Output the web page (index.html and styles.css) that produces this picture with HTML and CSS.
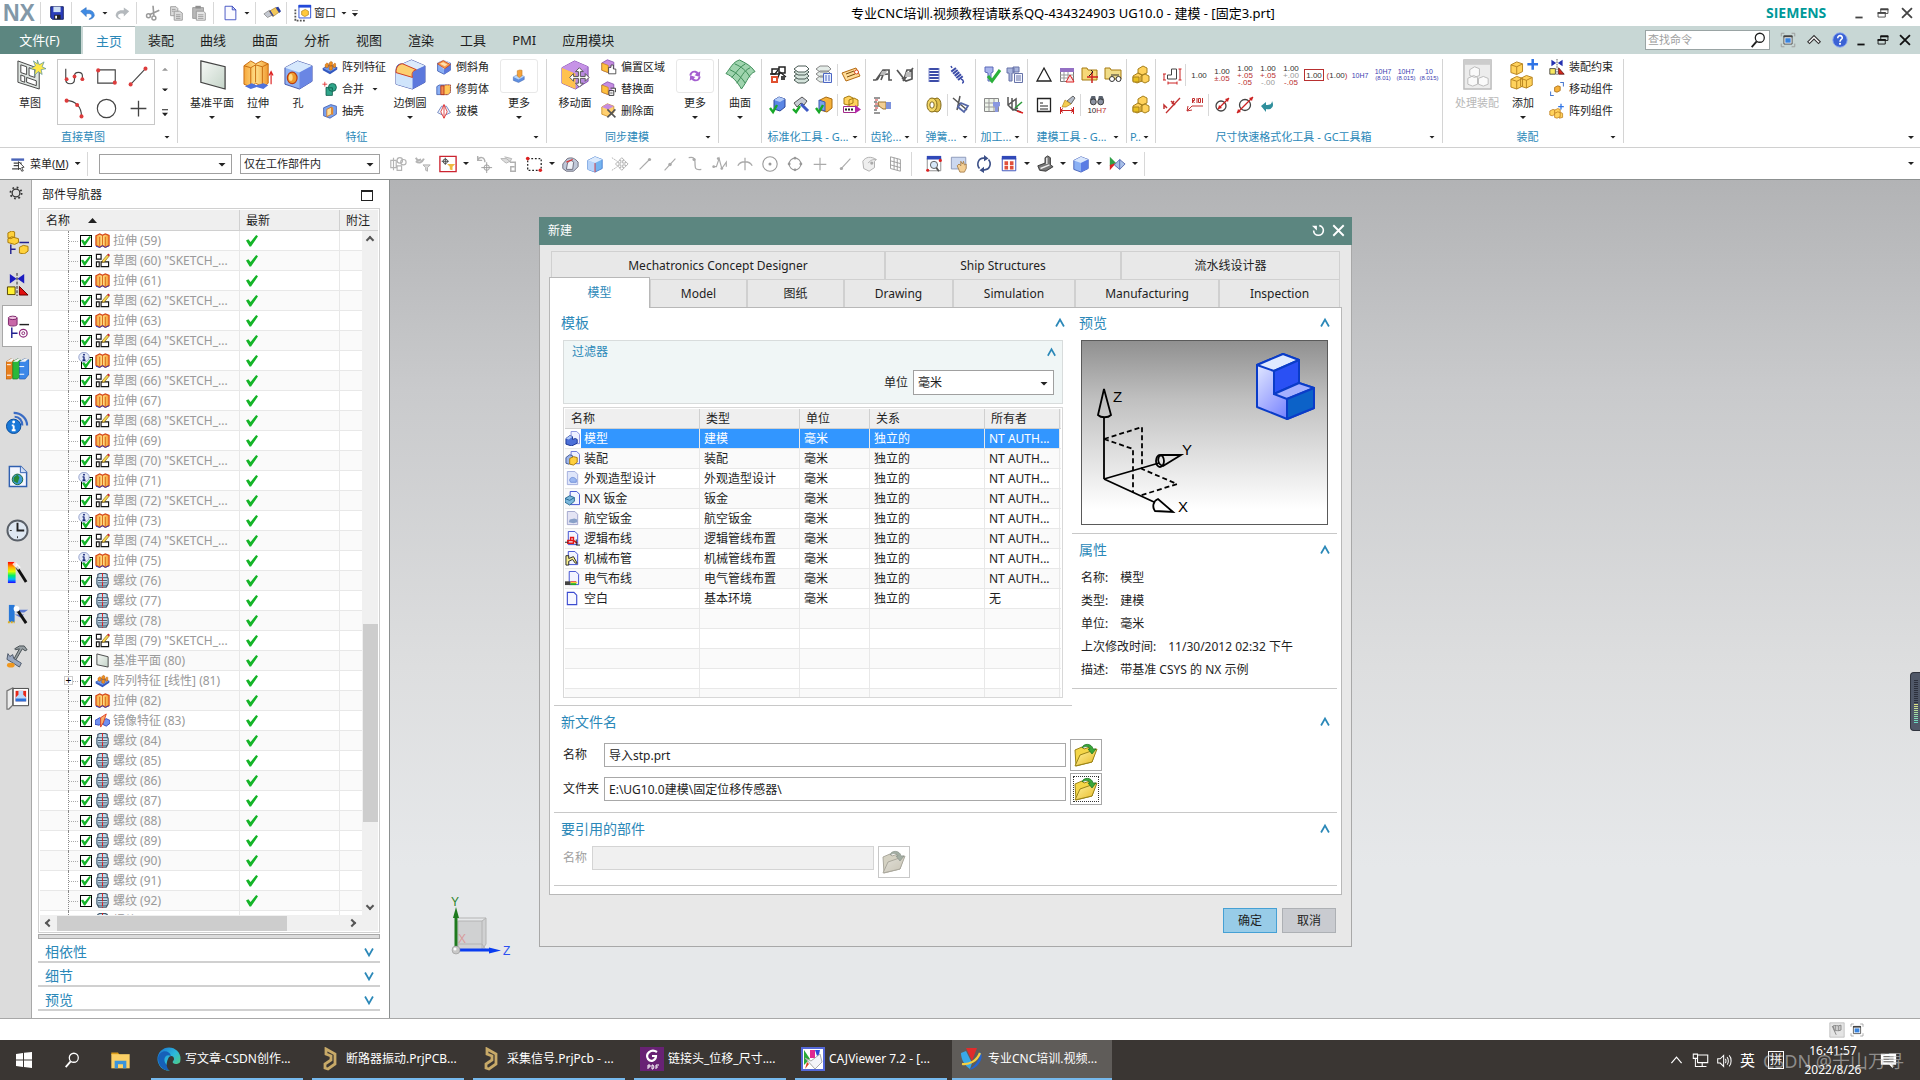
FILE: index.html
```html
<!DOCTYPE html>
<html lang="zh-CN">
<head>
<meta charset="UTF-8">
<meta name="viewport" content="width=device-width, initial-scale=1.0">
<title>NX 10 - 建模</title>
<link rel="stylesheet" href="styles.css">
</head>
<body>

<!-- Icon sprite -->
<svg class="sprite" aria-hidden="true">
<defs>
    <linearGradient id="gSilver" x1="0" y1="0" x2="1" y2="1"><stop offset="0" stop-color="#f6f8f6"/><stop offset="1" stop-color="#c4d4c8"/></linearGradient>
    <linearGradient id="gOrange" x1="0" y1="0" x2="1" y2="0"><stop offset="0" stop-color="#f6a83c"/><stop offset=".5" stop-color="#ffe08a"/><stop offset="1" stop-color="#f09a30"/></linearGradient>
    <linearGradient id="gYellow" x1="0" y1="0" x2="1" y2="1"><stop offset="0" stop-color="#fff6a8"/><stop offset="1" stop-color="#e8b820"/></linearGradient>
    <linearGradient id="gRainbow" x1="0" y1="0" x2="0" y2="1"><stop offset="0" stop-color="#f00"/><stop offset=".25" stop-color="#fa0"/><stop offset=".45" stop-color="#df0"/><stop offset=".65" stop-color="#0e6"/><stop offset=".82" stop-color="#0bf"/><stop offset="1" stop-color="#20f"/></linearGradient>
    <linearGradient id="gEdge" x1="0" y1="0" x2="1" y2="1"><stop offset="0" stop-color="#1a6fd0"/><stop offset=".5" stop-color="#2bb8dc"/><stop offset="1" stop-color="#62d65a"/></linearGradient>
    <linearGradient id="gFace" x1="0" y1="0" x2="1" y2="1"><stop offset="0" stop-color="#eef4ff"/><stop offset=".5" stop-color="#a0a8ff"/><stop offset="1" stop-color="#4a60ff"/></linearGradient>
</defs>

<symbol id="save" viewBox="0 0 20 20"><path d="M3 3h14v14H5l-2-2z" fill="#2a3dbb" stroke="#111c60"/><path d="M6 3h8v6H6z" fill="#cfe0f4"/><path d="M7 12h7v5H7z" fill="#222"/><path d="M8 13h2v3H8z" fill="#fff"/></symbol>
<symbol id="undo" viewBox="0 0 20 20"><path d="M2 8l6-4v3c6-1 9 2 9 6-1 3-4 4-6 4 3-2 4-3 3-5-1-1-3-2-6-1v3z" fill="#3f8be4" stroke="#2566bb" stroke-width=".6"/></symbol>
<symbol id="redo" viewBox="0 0 20 20"><path d="M18 8l-6-4v3c-6-1-9 2-9 6 1 3 4 4 6 4-3-2-4-3-3-5 1-1 3-2 6-1v3z" fill="#b4b9bd"/></symbol>
<symbol id="cut" viewBox="0 0 20 20"><path d="M10 2l1 11M17 7L6 12" stroke="#9a9a9a" stroke-width="1.8"/><circle cx="5" cy="13" r="2.2" fill="none" stroke="#9a9a9a" stroke-width="1.6"/><circle cx="11" cy="15.500" r="2.200" fill="none" stroke="#9a9a9a" stroke-width="1.600"/></symbol>
<symbol id="copy" viewBox="0 0 20 20"><g fill="#dcdcdc" stroke="#999"><path d="M4 3h6l2 2v8H4z"/><path d="M8 8h6l3 2v8H8z"/></g><path d="M5.500 6h4M5.500 8h2M10 12h5M10 14h5M10 16h5" stroke="#999"/></symbol>
<symbol id="paste" viewBox="0 0 20 20"><path d="M3 4h12v12H3z" fill="#b8b8b8" stroke="#999"/><path d="M6 2h6v3H6z" fill="#8f8f8f"/><path d="M7 8h8l2 2v8H7z" fill="#e6e6e6" stroke="#999"/><path d="M9 12h6M9 14h6M9 16h6" stroke="#999"/></symbol>
<symbol id="newdoc" viewBox="0 0 20 20"><path d="M4.500 2.500h8l4 4v11h-12z" fill="#fafaff" stroke="#3c4cc0"/><path d="M12.500 2.500v4h4z" fill="#cfd4f6" stroke="#3c4cc0"/></symbol>
<symbol id="eraser" viewBox="0 0 20 20"><path d="M1 11l6-4 4 5-6 3z" fill="#c4c8d0" stroke="#777" stroke-width=".7"/><path d="M7 8l7-4 4 5-7 5z" fill="#f2c75a" stroke="#a57b20" stroke-width=".7"/><path d="M14 4l3-1 3 5-2 2zM7 8l1-1 4 6-1 1z" fill="#2b3f9e"/></symbol>
<symbol id="win" viewBox="0 0 20 20"><path d="M1.500 6v12.500h12" fill="none" stroke="#555" stroke-dasharray="2 1.500" stroke-width="2"/><path d="M5.500 1.500h13v14h-13z" fill="#fff" stroke="#2248d8"/><path d="M5 1h14v3H5z" fill="#2248d8"/><path d="M8.500 8l4-2 3.500 2v4l-4 2-3.500-2z" fill="#ffc93c" stroke="#a87400" stroke-width=".7"/></symbol>
<symbol id="min" viewBox="0 0 20 20"><path d="M6 15h8" stroke="currentColor" stroke-width="2"/></symbol>
<symbol id="restore" viewBox="0 0 20 20"><path d="M7.500 9V5.500h8v5h-3" fill="none" stroke="currentColor"/><path d="M7 5h9v2H7z" fill="currentColor"/><path d="M4.500 9.500h8v5h-8z" fill="none" stroke="currentColor"/><path d="M4 9h9v2H4z" fill="currentColor"/></symbol>
<symbol id="close" viewBox="0 0 20 20"><path d="M4.500 4.500l11 11M15.500 4.500l-11 11" stroke="currentColor" stroke-width="2"/></symbol>
<symbol id="mag" viewBox="0 0 20 20"><circle cx="12" cy="7.500" r="5" fill="none" stroke="currentColor" stroke-width="1.400"/><path d="M8.500 11.500L3 18" stroke="currentColor" stroke-width="2"/></symbol>
<symbol id="full" viewBox="0 0 20 20"><path d="M2.500 6V2.500H6M14 2.500h3.500V6M17.500 14v3.500H14M6 17.500H2.500V14" fill="none" stroke="#999"/><path d="M5.500 5.500h9v9h-9z" fill="#fff" stroke="#444"/><path d="M5 5h10v2H5z" fill="#444"/><path d="M7 8h6v5H7z" fill="#3a84de"/></symbol>
<symbol id="ribup" viewBox="0 0 20 20"><path d="M3 12l7-7 7 7-2 2-5-5-5 5z" fill="#fff" stroke="#333" stroke-width="1.200"/></symbol>
<symbol id="help" viewBox="0 0 20 20"><circle cx="10" cy="10" r="8" fill="#3b62d4" stroke="#8aa6f2"/><path d="M7.500 8c0-4 5.500-3.500 5 0-.3 1.500-2.500 1.500-2.500 4" fill="none" stroke="#fff" stroke-width="1.800"/><circle cx="10" cy="14.300" r="1.200" fill="#fff"/></symbol>

<symbol id="sketch" viewBox="0 0 32 32"><path d="M3 2l22 8v21L3 24z" fill="#dfe6e2" stroke="#444"/><path d="M6 6l6 2v8l-6-2zM14.500 9l6 2v8l-6-2zM6 16.500l4 1.500v6l-4-1.500zM12 19l10 3.500v5l-10-3.500z" fill="#fff" stroke="#444"/><path d="M23 1l2 5 5-3-2 5 4 2-5 1 1 5-4-3-4 4 1-6-5-1 5-3-2-5 4 3z" fill="#ffe94a" stroke="#4e8c9c" stroke-width=".7"/></symbol>
<symbol id="spline" viewBox="0 0 24 24"><path d="M2 3v12c0 7 10 7 10 0v-4c0-5 9-5 9 0v4" fill="none" stroke="#444" stroke-width="1.300"/><g fill="#dd3c3c"><circle cx="3" cy="15" r="2.200"/><circle cx="12" cy="12" r="2.200"/><circle cx="21" cy="15" r="2.200"/></g></symbol>
<symbol id="rect" viewBox="0 0 24 24"><path d="M2 4.500h20v15H2z" fill="none" stroke="#444" stroke-width="1.300"/><g fill="#dd3c3c"><circle cx="2.500" cy="5" r="2.300"/><circle cx="21.500" cy="19" r="2.300"/></g></symbol>
<symbol id="line" viewBox="0 0 24 24"><path d="M3 21L20 3" stroke="#444" stroke-width="1.300"/><g fill="#dd3c3c"><circle cx="3" cy="21" r="2.300"/><circle cx="20" cy="3" r="2.300"/></g></symbol>
<symbol id="arc" viewBox="0 0 24 24"><path d="M3 3c10 0 17 7 17 18" fill="none" stroke="#444" stroke-width="1.300"/><g fill="#dd3c3c"><circle cx="3" cy="3" r="2.300"/><circle cx="15" cy="8" r="2.300"/><circle cx="20" cy="21" r="2.300"/></g></symbol>
<symbol id="circle" viewBox="0 0 24 24"><circle cx="12" cy="12" r="10.500" fill="none" stroke="#444" stroke-width="1.300"/></symbol>
<symbol id="plus" viewBox="0 0 24 24"><path d="M12 3v18M3 12h18" stroke="#444" stroke-width="1.500"/></symbol>

<symbol id="datum" viewBox="0 0 32 32"><path d="M4 2l25 6v23L4 24z" fill="url(#gSilver)" stroke="#444" stroke-width="1.300"/></symbol>
<symbol id="extrude" viewBox="0 0 32 32"><path d="M1 7v19l7 3 5-4 8 4 5-4V5l-7-3-6 3-5-3z" fill="url(#gOrange)" stroke="#c86c10"/><path d="M8 9v18M13 6v18M20 8v19M1 7l7 2 5-3 7 2 6-3" fill="none" stroke="#c86c10"/><path d="M2 28l7-3 5 2 7-2 5 2-5 4-7-2-6 2z" fill="#4e72dc"/><path d="M29 26V13m-2 4l2-4 2 4" fill="none" stroke="#d22" stroke-width="1.200"/></symbol>
<symbol id="hole" viewBox="0 0 32 32"><path d="M2 9l13-7 15 5v16l-13 8-15-5z" fill="#8fb2f4" stroke="#4858a8"/><path d="M2 9l13-7 15 5-13 7z" fill="#d6e8fc"/><path d="M17 14l13-7v16l-13 8z" fill="#6a86e4"/><ellipse cx="9.500" cy="19.500" rx="5" ry="6" fill="#ef9a2c" stroke="#b83c10" stroke-width="1.200"/><ellipse cx="8" cy="19" rx="2" ry="3.500" fill="#ffdc8c"/></symbol>
<symbol id="blend" viewBox="0 0 32 32"><path d="M1 13c0-7 3-8 7-8l9-4 14 6v17l-13 7-17-5z" fill="#8aaaf2" stroke="#4858a8"/><path d="M8 5l9-4 14 6-9 4z" fill="#dcebfd"/><path d="M18 18c0-4 1-6 4-7l9-4v17l-13 7z" fill="#5c78dc"/><path d="M1 14l17 5v12L1 26z" fill="#cfe4fb"/><path d="M1 14c0-6 3-9 7-9l14 6c-4 1-5 4-4 8z" fill="#fcd070" stroke="#d23c20"/></symbol>
<symbol id="moveface" viewBox="0 0 32 32"><path d="M2 9l13-7 14 6v15l-13 8-14-6z" fill="#b98ae0" stroke="#8450b0"/><path d="M2 9l14 6v16L2 25z" fill="#ffc24e"/><path d="M2 9l13-7 14 6-13 7z" fill="#c693e6"/><g transform="translate(6 7)"><path d="M14 2l4 4h-3v5h5V8l4 4-4 4v-3h-5v5h3l-4 4-4-4h3v-5H8v3l-4-4 4-4v3h5V6h-3z" fill="#fff" stroke="#555"/></g></symbol>
<symbol id="more1" viewBox="0 0 32 32"><path d="M3 18l12-6 13 5v7l-13 7-12-5z" fill="#5f8fe0" stroke="#375ba8"/><path d="M3 18l12-6 13 5-13 7z" fill="#b8d6fa"/><path d="M12 4l6-2 5 1v12l-6 5-5-4z" fill="#f4a23a" stroke="#b46a10"/></symbol>
<symbol id="more2" viewBox="0 0 32 32"><path d="M3 15C4 3 18 1 24 8l4-3-1 13-12-4 4-3c-4-5-10-3-11 3z" fill="#a45fd0"/><path d="M29 17c-1 12-15 14-21 7l-4 3 1-13 12 4-4 3c4 5 10 3 11-3z" fill="#a45fd0"/></symbol>
<symbol id="surface" viewBox="0 0 32 32"><path d="M1 15C6 9 8 3 15 1c6 3 12 6 16 12-6 2-8 10-14 18C13 24 8 18 1 15z" fill="#9fd4ae" stroke="#3b8a56"/><path d="M5 11c7 3 12 8 16 14M10 5c7 3 12 7 16 14M7 19c5-5 8-11 14-14M12 25c5-6 7-13 14-16" fill="none" stroke="#3b8a56"/></symbol>
<symbol id="procasm" viewBox="0 0 32 32"><path d="M2 1h28v30H2z" fill="#ececec" stroke="#bbb" stroke-width="1.500"/><path d="M2 1h28v5H2z" fill="#ccc"/><g fill="#fafafa" stroke="#bbb"><path d="M8 11l5-3 5 2v7l-5 2-5-2zM6 20l6-3 4 2v7l-5 2-5-2zM17 20l5-2 5 2v6l-5 2-5-2z"/></g></symbol>
<symbol id="addasm" viewBox="0 0 32 32"><g fill="#ffd25c" stroke="#b88420"><path d="M3 6l6-3 6 2v8l-6 3-6-2zM3 21l6-3 6 2v8l-6 3-6-2zM13 20l6-3 6 2v8l-6 3-6-2z"/></g><path d="M3 6l6 2 6-3M9 8v8M3 21l6 2 6-3M9 23v8M13 20l6 2 6-3M19 22v8" fill="none" stroke="#b88420"/><path d="M25.500 0v11M20 5.500h11" stroke="#2f74e6" stroke-width="2.600"/></symbol>

<symbol id="pattern" viewBox="0 0 20 20"><path d="M1 12l9-5 9 4-9 6z" fill="#6f98ea" stroke="#2d4fae"/><path d="M1 12l9 4 9-5v2l-9 6-9-5z" fill="#3258c0"/><path d="M4 7l2-2 2 1v4l-2 1-2-1zM9 5l2-2 2 1v4l-2 1-2-1zM9 10l2-2 2 1v4l-2 1-2-1zM14 7l2-2 1 1v4l-2 1-1-1z" fill="#f09020" stroke="#a85408" stroke-width=".6"/></symbol>
<symbol id="unite" viewBox="0 0 20 20"><path d="M5 8h8v10H5z" fill="#2fa58a" stroke="#0c5846"/><circle cx="13" cy="8" r="5" fill="#2fa58a" stroke="#0c5846"/><path d="M8.500 8.500H13V12" fill="none" stroke="#0c5846"/><path d="M3.500 1v6M.5 4h6" stroke="#d22"/></symbol>
<symbol id="shell" viewBox="0 0 20 20"><path d="M2 6l9-4 7 2v10l-8 5-8-3z" fill="#7aa2ee" stroke="#3d59ac"/><path d="M6 8l6-3v9l-6 3z" fill="#ffe09a" stroke="#d07018"/><path d="M12 5l2 1v9l-2-1z" fill="#e88a28"/></symbol>
<symbol id="chamfer" viewBox="0 0 20 20"><path d="M2 5l7-3 9 3v9l-8 5-8-4z" fill="#8bb0f4" stroke="#3d59ac"/><path d="M10 12v7l8-5V6z" fill="#5c78dc"/><path d="M2 5l7-4 9 4-8 8z" fill="#d8e8fc"/><path d="M2 6l7-4 9 5-7 5z" fill="#f8a050" stroke="#c84018"/><path d="M5 6l4-2 5 3-3 2z" fill="#ffe0b0"/></symbol>
<symbol id="trim" viewBox="0 0 20 20"><path d="M1 7l3-2h14v9l-3 3H1z" fill="#8bb0f4" stroke="#3d59ac"/><path d="M9 7l3-2h6v9l-3 3H9z" fill="#ffc85a" stroke="#c84018" stroke-dasharray="2 1"/><path d="M6 6h4v11H6z" fill="#f08a50" stroke="#b02a10"/></symbol>
<symbol id="draft" viewBox="0 0 20 20"><path d="M2 12L7 4h6l5 8-8 4z" fill="#e9f2fc" stroke="#5d74b8"/><path d="M10 2l4 9-4 8-4-8z" fill="#fff" stroke="#d22"/><path d="M10 2v17" stroke="#d22"/></symbol>
<symbol id="sync" viewBox="0 0 20 20"><path d="M1 5l7-4 8 3v8l-7 5-8-3z" fill="#c58be0" stroke="#8450b0"/><path d="M1 5l8 3v9l-8-3z" fill="#ffc040" stroke="#c88a20"/><path d="M9.500 18.500v-8h3v-3h3v5h3v6z" fill="#fff" stroke="#333"/></symbol>
<symbol id="syncrep" viewBox="0 0 20 20"><path d="M1 5l7-4 8 3v8l-7 5-8-3z" fill="#c58be0" stroke="#8450b0"/><path d="M1 5l8 3v9l-8-3z" fill="#ffc040" stroke="#c88a20"/><path d="M10 12h6v6h-6zM12 9h6v5" fill="#fff" stroke="#333" stroke-width="1.200"/><path d="M11.500 15h3" stroke="#333"/></symbol>
<symbol id="syncdel" viewBox="0 0 20 20"><path d="M1 5l7-4 8 3v8l-7 5-8-3z" fill="#ffd070" stroke="#c88a20"/><path d="M1 5l7-4 8 3-7 4z" fill="#c58be0"/><path d="M8 8l10 10M18 8L8 18" stroke="#555" stroke-width="2"/></symbol>

<symbol id="g-attr" viewBox="0 0 20 20"><path d="M4 4h7v5H4zM11 2h6v6h-6z" fill="#fff" stroke="#222" stroke-width="1.500"/><path d="M2 9h5l3-4M9 15l3-8 6 5" fill="none" stroke="#222" stroke-width="1.300"/><path d="M13 11h4v4h-4z" fill="#444"/><path d="M4 12h5v5H4z" fill="#fff" stroke="#e05030" stroke-width="2"/></symbol>
<symbol id="g-layers" viewBox="0 0 20 20"><g fill="#d5e4dc" stroke="#4a5a54"><path d="M3 15l4-3h8l3 3-4 3H7z"/><path d="M3 11l4-3h8l3 3-4 3H7z"/><path d="M3 7l4-3h8l3 3-4 3H7z"/><path d="M3 4l4-3h8l3 3-4 3H7z" fill="#fff"/></g></symbol>
<symbol id="g-list" viewBox="0 0 20 20"><g fill="#e4ece8" stroke="#888"><path d="M2 14l4-3h8l3 3-4 3H6zM2 9l4-3h8l3 3-4 3H6zM2 4l4-3h8l3 3-4 3H6z"/></g><path d="M9.500 8.500h8v9h-8z" fill="#e9f0ff" stroke="#4c66c4"/><path d="M11 11h2M14 11h2M11 13h2M14 13h2M11 15h2M14 15h2" stroke="#4c66c4"/></symbol>
<symbol id="g-tag" viewBox="0 0 20 20"><path d="M1 8l14-5 4 8-14 5z" fill="#ffdc98" stroke="#b46a10"/><path d="M5 9l8-3M6 12l8-3" stroke="#7a4a08"/><circle cx="15.500" cy="7" r="2" fill="#fff" stroke="#d84820"/></symbol>
<symbol id="g-chk" viewBox="0 0 20 20"><path d="M6 5l5-3 6 2v8l-5 4-6-2z" fill="#5a86e4" stroke="#2b479c"/><path d="M6 5l5-3 6 2-5 3z" fill="#b4ccf8"/><path d="M2 13l3 4 4-7" fill="none" stroke="#18a828" stroke-width="2.400"/></symbol>
<symbol id="g-chky" viewBox="0 0 20 20"><path d="M6 5l6-3 6 2v9l-5 4-7-2z" fill="#f6b23c" stroke="#a66a10"/><path d="M5 5l6 2v9l-6-2z" fill="#7aa2ee" stroke="#3d59ac"/><path d="M2 13l3 4 4-7" fill="none" stroke="#18a828" stroke-width="2.400"/></symbol>
<symbol id="g-chkt" viewBox="0 0 20 20"><path d="M3 8l8-6 5 4-3 4-3-2-4 4z" fill="#c8ccd4" stroke="#555"/><path d="M10 9l7 7" stroke="#3c58c4" stroke-width="3"/><path d="M2 14l3 3 4-6" fill="none" stroke="#18a828" stroke-width="2.400"/></symbol>
<symbol id="g-exp" viewBox="0 0 20 20"><path d="M3 3l5-2 4 2v5l-5 2-4-1zM8 5l5-2 4 2v6l-9 2z" fill="#ffd25c" stroke="#a67a10"/><path d="M2.500 11.500h12v6h-12z" fill="#fff" stroke="#a22a8a"/><path d="M4 14.500h9" stroke="#222" stroke-dasharray="2 1" stroke-width="2"/><path d="M14 10l6 4.500-6 4z" fill="#b428a8"/></symbol>
<symbol id="g-gear" viewBox="0 0 20 20"><path d="M1 15h3l7-10h6v10h3M5 15l3-5 8-1M9 15l4-10" fill="none" stroke="#555" stroke-width="1.700"/><path d="M10 6h5l-2 4H8z" fill="#bbb"/></symbol>
<symbol id="g-gear2" viewBox="0 0 20 20"><path d="M2 5l7 9 3-9h5v9l-6 2-4-3M18 3L8 16" fill="none" stroke="#555" stroke-width="1.700"/><path d="M11 7h5v5h-6z" fill="#bbb"/></symbol>
<symbol id="g-hand" viewBox="0 0 20 20"><path d="M2 3h6M2 7h3M2 11h5M2 15h3M2 18h6" stroke="#333"/><path d="M3 5h3M3 9h3M3 13h3" stroke="#c33"/><path d="M6 7h8v7h-3l-4-3z" fill="#f2cf94" stroke="#9a7434"/><path d="M14 7h5v7h-5z" fill="#7d93dc"/></symbol>
<symbol id="g-spring" viewBox="0 0 20 20"><g fill="none" stroke="#3c4ca8" stroke-width="2"><path d="M5 4h10M5 7h10M5 10h10M5 13h10M5 16h10"/></g><path d="M5 3v14M15 3v14" stroke="#8490d0"/></symbol>
<symbol id="g-spring2" viewBox="0 0 20 20"><path d="M6 4l8 10" stroke="#3c4ca8" stroke-width="6" stroke-dasharray="2 .7"/><path d="M5 3l-1-2M14 14c3 1 3 4 1 4" fill="none" stroke="#3c4ca8" stroke-width="1.500"/></symbol>
<symbol id="g-disc" viewBox="0 0 20 20"><path d="M7 3h6v14H7z" fill="#b8982c"/><ellipse cx="13" cy="10" rx="4" ry="7" fill="#e0bf4c" stroke="#80681a"/><ellipse cx="8" cy="10" rx="5" ry="7" fill="#f4d868" stroke="#80681a"/><ellipse cx="8" cy="10" rx="2.200" ry="3.200" fill="#fff" stroke="#80681a"/></symbol>
<symbol id="g-snip" viewBox="0 0 20 20"><path d="M2 3l14 12M9 1L6 15" stroke="#555" stroke-width="1.500"/><path d="M10 8l7 3-4 6-6-5z" fill="none" stroke="#5668a8" stroke-width="1.800"/></symbol>
<symbol id="g-mach" viewBox="0 0 20 20"><path d="M3 2h8v5l-2 1v8H6V8L3 7z" fill="#a8b4ec" stroke="#5a68b8"/><path d="M6 11l4 5 8-11" fill="none" stroke="#2ab03a" stroke-width="3"/></symbol>
<symbol id="g-mach2" viewBox="0 0 20 20"><path d="M2 3h7v5H7v8H4V8H2zM8 2h6v5H8z" fill="#a8b4dc" stroke="#6673a8"/><path d="M9.500 8.500h8v9h-8z" fill="#f4f6ff" stroke="#6673a8"/><path d="M11 11h5M11 13h5M11 15h5" stroke="#6673a8"/></symbol>
<symbol id="g-grid" viewBox="0 0 20 20"><path d="M2.500 3.500h14v13h-14z" fill="#eef4ea" stroke="#888"/><path d="M2 8h15M2 12h15M7 4v12M12 4v12" stroke="#999"/><path d="M11 7h7v4l-2 1v5h-3v-5l-2-1z" fill="#8a98e0"/></symbol>
<symbol id="g-axis" viewBox="0 0 20 20"><path d="M3 2v8l5 5 5-2M3 10l8-6v9M7 3v11l9 3" fill="none" stroke="#555" stroke-width="1.500"/><path d="M10 13l7-6" stroke="#2a9a3a" stroke-width="1.500"/><path d="M12 16l6 2" stroke="#d22" stroke-width="1.500"/></symbol>
<symbol id="g-tri" viewBox="0 0 20 20"><path d="M10 3l7 13H3z" fill="none" stroke="#222" stroke-width="1.300"/></symbol>
<symbol id="g-table" viewBox="0 0 20 20"><path d="M3.500 3.500h13v13h-13z" fill="#fff" stroke="#777"/><path d="M3 3h14v4H3z" fill="#9470c4"/><path d="M3 10h14M3 13h14M7 7v10M11 7v10" stroke="#999"/><path d="M13 10l4 7H9z" fill="#fbe0e0" stroke="#d22"/></symbol>
<symbol id="g-fold" viewBox="0 0 20 20"><path d="M2 3h5l1 2h9v10H2z" fill="#f6d878" stroke="#a67a10"/><path d="M7 12h11M12 7v11" stroke="#c22" stroke-width="1.500"/><path d="M11 5l2 2-4 4" fill="none" stroke="#222"/></symbol>
<symbol id="g-fold2" viewBox="0 0 20 20"><path d="M2 3h5l1 2h10v9H2z" fill="#f0dc88" stroke="#a67a10"/><circle cx="9" cy="14" r="2.500" fill="#fff" stroke="#333"/><circle cx="15.500" cy="14" r="2.500" fill="#fff" stroke="#333"/><path d="M8 10h8" stroke="#333"/></symbol>
<symbol id="g-note" viewBox="0 0 20 20"><path d="M3.500 3.500h13v13h-13z" fill="#fff" stroke="#222" stroke-width="1.300"/><path d="M6 8h3M6 11h8M6 14h8" stroke="#222"/></symbol>
<symbol id="g-brush" viewBox="0 0 20 20"><path d="M10 6l6-5 2 2-4 6z" fill="#b4bcc8" stroke="#666"/><path d="M8 5l6 4-5 3H5z" fill="#f4cc50" stroke="#a67a10" stroke-width=".6"/><path d="M3.500 12v7M16.500 12v7M3 15.500h14M6 13.500l-3 2 3 2M14 13.500l3 2-3 2" fill="none" stroke="#c22"/></symbol>
<symbol id="g-find" viewBox="0 0 20 12"><path d="M4 1h4l1 5H2zM12 1h4l2 5h-7z" fill="#5c6470"/><circle cx="6" cy="7.500" r="3.200" fill="#8c94a4" stroke="#333"/><circle cx="14" cy="7.500" r="3.200" fill="#8c94a4" stroke="#333"/></symbol>
<symbol id="g-part" viewBox="0 0 20 20"><g fill="#ffd25c" stroke="#a6801c"><path d="M7 4l5-3 4 2v5l-5 2-4-2zM2 11l5-3 4 2v6l-5 2-4-2zM10 11l4-2 4 2v5l-4 2-4-2z"/></g><path d="M2 12h6v5H2z" fill="#e8c020" stroke="#a6801c"/></symbol>
<symbol id="g-dim" viewBox="0 0 20 20"><path d="M5.500 14v-4h4V4h5v10z" fill="#fff" stroke="#444"/><path d="M2 9v6M1 9h3M1 15h3M18 4v11M16.500 4h3M16.500 15h3M6 18h9M6 16.500v3M15 16.500v3" stroke="#c22"/></symbol>
<symbol id="g-rd" viewBox="0 0 20 20"><path d="M4 18L18 3" stroke="#c23030" stroke-width="1.300"/><path d="M2 14v-4l3 3M9 6l4 4M10 9l2-3" fill="none" stroke="#c23030" stroke-width="1.500"/></symbol>
<symbol id="g-rd2" viewBox="0 0 20 20"><path d="M2 16l5-5h11M2 16l5-1M2 16l1-5" fill="none" stroke="#c23030"/><path d="M7.500 8V3.500h2v2h-2l2 2.500M12 3v5M13.500 3.500h2v4h-2zM17.500 3v5" fill="none" stroke="#c23030"/></symbol>
<symbol id="g-dia" viewBox="0 0 20 20"><circle cx="9" cy="11" r="5" fill="none" stroke="#444" stroke-width="1.300"/><path d="M6 14L17 3" stroke="#c22" stroke-width="1.300"/><path d="M6 14l1-4 3 3zM17 3l-4 1 3 3z" fill="#c22"/></symbol>
<symbol id="g-dia2" viewBox="0 0 20 20"><circle cx="10" cy="10" r="5.500" fill="none" stroke="#444" stroke-width="1.300"/><path d="M2 18L18 2" stroke="#c22" stroke-width="1.300"/><path d="M2 18l1-4 3 3zM18 2l-4 1 3 3z" fill="#c22"/></symbol>
<symbol id="g-back" viewBox="0 0 20 20"><path d="M3 11l5-4v3c4 0 6-1 6-4 3 6-1 9-6 8v3z" fill="#2f8f9c"/></symbol>
<symbol id="a-con" viewBox="0 0 20 20"><path d="M3 1l6 4-6 4zM17 1l-6 4 6 4z" fill="#2430b0"/><path d="M10 0v20" stroke="#333" stroke-dasharray="2 1"/><path d="M1 12h7v7H1z" fill="#f8e860" stroke="#333"/><path d="M12 11l7 8h-7z" fill="#d8281c" stroke="#511"/></symbol>
<symbol id="a-mov" viewBox="0 0 20 20"><path d="M7 8l4-2 3 1v5l-4 2-3-1z" fill="#f6b23c" stroke="#a66a10"/><path d="M14 2h4v5M6 18H2v-5" fill="none" stroke="#4878d0" stroke-width="1.300"/></symbol>
<symbol id="a-pat" viewBox="0 0 20 20"><g fill="#ffd25c" stroke="#c08020"><path d="M1 10l4-2 3 1v5l-4 2-3-1z"/><path d="M7 9l4-2 3 1v4l-7 1zM12 13l3-1 2 1v5l-4 1z"/><path d="M7 13l4-2 3 1v5l-4 2-3-1z"/></g><path d="M15 1v7M11.500 4.500h7" stroke="#2f74e6" stroke-width="1.600"/></symbol>

<symbol id="s-menu" viewBox="0 0 20 20"><path d="M1 3h16v3H1z" fill="#4a64b8"/><path d="M4 9h10M4 12h9M2 16h9" stroke="#444" stroke-width="1.500"/><path d="M10 7l7 7-3 .5 2 4-2 .500-2-4-2 2z" fill="#fff" stroke="#222"/></symbol>
<symbol id="s-a" viewBox="0 0 20 20"><g fill="none" stroke="#b4b4b4" stroke-width="1.300"><path d="M5 3v14M2 6h6v8H2zM9 12h5v5H9z"/><circle cx="12" cy="6" r="3"/><circle cx="16" cy="8" r="3"/></g></symbol>
<symbol id="s-b" viewBox="0 0 20 20"><path d="M2 3l2 3 4-1M2 7c4 3 7 1 9-3" fill="none" stroke="#b4b4b4" stroke-width="2.200"/><path d="M10 11h8l-3 3v4l-2-1v-3z" fill="#ddd" stroke="#aaa"/></symbol>
<symbol id="s-c" viewBox="0 0 20 20"><path d="M1 1.500h18v17H1z" fill="#fff" stroke="#cc2430" stroke-width="1.500"/><circle cx="7" cy="7" r="2.500" fill="none" stroke="#444"/><path d="M7 3v8M3 7h8" stroke="#444"/><path d="M9 10h9l-3 3v4l-3-1v-3z" fill="#f0b840"/></symbol>
<symbol id="s-d" viewBox="0 0 20 20"><path d="M3 6c2-5 8-4 8 2M3 1v5h5" fill="none" stroke="#b0b0b0" stroke-width="1.600"/><circle cx="13" cy="14" r="3" fill="none" stroke="#999"/><path d="M13 8v12M7 14h12" stroke="#999"/></symbol>
<symbol id="s-e" viewBox="0 0 20 20"><path d="M1 4h6l4 3-4 2-3-2zM5 2l8 2-2 4" fill="#ddd" stroke="#b0b0b0"/><path d="M11 8h6v10h-5v-5h4" fill="none" stroke="#b0b0b0" stroke-width="1.600"/></symbol>
<symbol id="s-f" viewBox="0 0 20 20"><path d="M3 4h15v13H3z" fill="none" stroke="#222" stroke-dasharray="2 2" stroke-width="1.400"/><circle cx="3" cy="4" r="2" fill="#d22"/><circle cx="17" cy="17" r="2" fill="#d22"/></symbol>
<symbol id="s-g" viewBox="0 0 20 20"><path d="M2 10l5-6c5-2 9 0 12 4v5l-5 5H6l-4-3z" fill="#c0c8d8" stroke="#667"/><path d="M7 10c1-4 5-5 7-2l-1 8H6z" fill="#f0f2f8" stroke="#667"/><path d="M6 8l7-3" stroke="#d33" stroke-width="1.500"/></symbol>
<symbol id="s-h" viewBox="0 0 20 20"><path d="M2 6l8-4 8 3v10l-8 4-8-3z" fill="#74b4f0" stroke="#4a7fd0"/><path d="M2 6l8 3v10l-8-3z" fill="#b8d4fa"/><path d="M10 9v10" stroke="#d33"/><path d="M2 6l8-4 8 3-8 4z" fill="#dceafc"/></symbol>
<symbol id="s-i" viewBox="0 0 20 20"><path d="M1 3l6 4M1 17l6-4" stroke="#aaa" stroke-dasharray="2 1"/><path d="M12 3l3 3h-2v3h3V7l3 3-3 3v-2h-3v3h2l-3 3-3-3h2v-3H8v2l-3-3 3-3v2h3V6H9z" fill="none" stroke="#aaa"/></symbol>
<symbol id="s-l1" viewBox="0 0 20 20"><path d="M4 16L15 5" stroke="#aaa" stroke-width="1.300"/><circle cx="15" cy="5" r="1.800" fill="#aaa"/></symbol>
<symbol id="s-l2" viewBox="0 0 20 20"><path d="M4 17L16 4" stroke="#aaa" stroke-width="1.300"/><circle cx="10" cy="10.500" r="1.900" fill="#aaa"/></symbol>
<symbol id="s-cv" viewBox="0 0 20 20"><path d="M3 3c5-1 7 0 7 5 0 7 0 9 7 8" fill="none" stroke="#aaa" stroke-width="1.400"/><circle cx="9" cy="5" r="1.800" fill="#aaa"/></symbol>
<symbol id="s-zz" viewBox="0 0 20 20"><path d="M2 13h4L9 4l3 11 5-7v5" fill="none" stroke="#aaa" stroke-width="1.300"/><circle cx="8" cy="4" r="1.500" fill="#aaa"/><circle cx="12" cy="15" r="1.500" fill="#aaa"/><circle cx="3" cy="13" r="1.500" fill="#aaa"/></symbol>
<symbol id="s-int" viewBox="0 0 20 20"><path d="M2 12c3-6 13-6 16 0M10 3v14" fill="none" stroke="#aaa" stroke-width="1.400"/></symbol>
<symbol id="s-cc" viewBox="0 0 20 20"><circle cx="10" cy="10" r="8" fill="none" stroke="#999" stroke-width="1.200"/><circle cx="10" cy="10" r="1.700" fill="#999"/></symbol>
<symbol id="s-cq" viewBox="0 0 20 20"><circle cx="10" cy="10" r="6.500" fill="none" stroke="#999" stroke-width="1.200"/><g fill="#999"><circle cx="10" cy="3.500" r="1.600"/><circle cx="10" cy="16.500" r="1.600"/><circle cx="3.500" cy="10" r="1.600"/><circle cx="16.500" cy="10" r="1.600"/></g></symbol>
<symbol id="s-pl" viewBox="0 0 20 20"><path d="M10 3v14M3 10.500h14" stroke="#aaa" stroke-width="1.300"/></symbol>
<symbol id="s-l3" viewBox="0 0 20 20"><path d="M5 16L16 4" stroke="#aaa" stroke-width="1.200"/><circle cx="6" cy="15" r="1.800" fill="#aaa"/></symbol>
<symbol id="s-sf" viewBox="0 0 20 20"><path d="M2 7c3-5 9-6 15-2l-2 2v7l-6 4-6-3z" fill="#eee" stroke="#aaa"/><path d="M8 9c3-4 6-4 9-4" fill="none" stroke="#aaa"/><circle cx="12" cy="9" r="1.800" fill="#aaa"/></symbol>
<symbol id="s-gr" viewBox="0 0 20 20"><path d="M5 2l11 3v13L5 15zM9 3v13M12.500 4v13M5 6.500l11 3M5 11l11 3" fill="none" stroke="#999"/></symbol>
<symbol id="v-fit" viewBox="0 0 20 20"><path d="M2.500 3.500h15v14h-15z" fill="#fff" stroke="#888"/><path d="M2 1h16v4H2z" fill="#3048b8"/><circle cx="10" cy="11" r="4" fill="#d8e8f8" stroke="#555"/><path d="M12.500 14l3 4" stroke="#555" stroke-width="2"/><circle cx="3" cy="17" r="1.700" fill="#d22"/><circle cx="17" cy="6" r="1.700" fill="#d22"/></symbol>
<symbol id="v-pan" viewBox="0 0 20 20"><path d="M1.500 2.500h16v13h-16z" fill="#ccd8f0" stroke="#8894b4"/><path d="M8 12l2-2 2 2 0-5 2 3 1-3 1 4 2-1v5l-2 4h-5z" fill="#f4cf94" stroke="#a8804c"/></symbol>
<symbol id="v-rot" viewBox="0 0 20 20"><path d="M5 15C1 10 4 3 10 3.500M15 5c4 5 1 12-5 11.500" fill="none" stroke="#3c5088" stroke-width="1.800"/><path d="M10 0l5 4-5 3zM10 13l-5 4 5 3z" fill="#3c5088"/></symbol>
<symbol id="v-grid" viewBox="0 0 20 20"><path d="M2.500 3.500h15v14h-15z" fill="#fff" stroke="#3048b8"/><path d="M2 1h16v4H2z" fill="#3048b8"/><path d="M5 7h4v4H5zM11 7h4v4h-4zM5 12h4v4H5zM11 12h4v4h-4z" fill="#e0503c"/></symbol>
<symbol id="v-sec" viewBox="0 0 20 20"><path d="M2 12l8-3V3l3-2 3 2v8l3 2-8 5-7-1z" fill="#777" stroke="#333"/><path d="M5 15l10-4M12 3v7" fill="none" stroke="#eee" stroke-width="1.500"/></symbol>
<symbol id="v-cube" viewBox="0 0 20 20"><path d="M2 6l8-4 8 3v10l-8 4-8-3z" fill="#8ab0f4" stroke="#4460b8"/><path d="M2 6l8-4 8 3-8 4z" fill="#d8e6fc"/><path d="M10 9l8-4v10l-8 4z" fill="#5a7ce4"/></symbol>
<symbol id="v-flip" viewBox="0 0 20 20"><path d="M2 2l7 7-7 3z" fill="#30a048"/><path d="M2 11l7-2-7 8z" fill="#d22"/><path d="M7 11l6-6 6 5-6 6z" fill="#a8c0e8" stroke="#5568b0"/><path d="M13 5v11" stroke="#5568b0"/></symbol>

<symbol id="r-gear" viewBox="0 0 20 20"><circle cx="10" cy="10" r="5.500" fill="none" stroke="#333" stroke-width="1.800"/><circle cx="10" cy="10" r="8" fill="none" stroke="#333" stroke-width="2.500" stroke-dasharray="2.500 3.783"/></symbol>
<symbol id="r-asm" viewBox="0 0 24 24"><g fill="#ffd23c" stroke="#a87a08"><path d="M2 2l4-2 3 1v5l-4 2-3-1zM2 8l4-2 7 2v4l-4 2-7-2zM14 17l4-2 5 1v5l-4 3-5-1z"/></g><path d="M5 14v10M5 19h5M14 12h10" stroke="#222290" stroke-width="1.500"/></symbol>
<symbol id="r-con" viewBox="0 0 24 24"><path d="M4 1l7 5-7 5zM19 1l-7 5 7 5z" fill="#1c1cc0"/><path d="M11.500 0v24" stroke="#222" stroke-dasharray="3 1.500"/><path d="M1.500 14.500h8v8h-8z" fill="#fff030" stroke="#554400"/><path d="M14 14l9 9h-9z" fill="#e01010" stroke="#600"/></symbol>
<symbol id="r-part" viewBox="0 0 24 24"><path d="M1.500 3v7c0 2 9 2 9 0V3z" fill="#c868a8" stroke="#7a2468"/><ellipse cx="6" cy="3" rx="4.500" ry="1.800" fill="#f0c0e0" stroke="#7a2468"/><path d="M5 13v11M5 19h6" stroke="#222290" stroke-width="1.500"/><path d="M13 10h10" stroke="#222" stroke-width="1.500"/><circle cx="17" cy="19" r="4" fill="#fff" stroke="#8c2878" stroke-width="1.300"/><circle cx="17" cy="19" r="1.500" fill="none" stroke="#8c2878"/></symbol>
<symbol id="r-books" viewBox="0 0 24 24"><path d="M0 5l5-3 3 1v17l-3 3H0z" fill="#e88020" stroke="#a85408" stroke-width=".6"/><path d="M7 5l5-3 3 1v17l-3 3H7z" fill="#2ab83a" stroke="#106818" stroke-width=".6"/><path d="M14 5l5-3 5 1v15l-4 5h-6z" fill="#3c88e8" stroke="#1850a0" stroke-width=".6"/><path d="M1 8h4M1 19h4M14 10h5M14 18h5" stroke="#fff"/><path d="M0 5l5-3h3L6 5zM7 5l5-3h3l-3 3zM14 5l5-3h4l-3 3z" fill="#f4f4f4"/></symbol>
<symbol id="r-info" viewBox="0 0 24 24"><circle cx="8" cy="16" r="7.500" fill="#1878d8" stroke="#0a4c9c"/><path d="M8 15v5M6 15h2M6 20h4" stroke="#fff" stroke-width="2"/><circle cx="8" cy="11.500" r="1.500" fill="#fff"/><path d="M9 6c5 0 8 4 8 9M8 2c8 0 14 6 14 13" fill="none" stroke="#3a6cc4" stroke-width="2.200"/></symbol>
<symbol id="r-doc" viewBox="0 0 24 24"><path d="M3.500 1.500h12l6 6v15h-18z" fill="#f4f6ff" stroke="#3060b0" stroke-width="1.500"/><path d="M15 1v7h7" fill="#d0dcf4" stroke="#3060b0"/><circle cx="12" cy="15" r="5.500" fill="#3c98d8" stroke="#1c6838"/><path d="M8 13l4-3 2 3-2 6-4-2z" fill="#288838"/></symbol>
<symbol id="r-clock" viewBox="0 0 24 24"><circle cx="12" cy="12" r="10.500" fill="#dfe8f2" stroke="#5a6068" stroke-width="2"/><path d="M12 4v8h7" fill="none" stroke="#222" stroke-width="2"/><path d="M12 18v2M4 12h2" stroke="#333"/></symbol>
<symbol id="r-wand" viewBox="0 0 24 24"><path d="M2 1h8v22H2z" fill="url(#gRainbow)"/><path d="M11 6l10 16" stroke="#111" stroke-width="3"/><path d="M8 2l6 6" stroke="#fff" stroke-width="4" opacity=".8"/></symbol>
<symbol id="r-wand2" viewBox="0 0 24 24"><path d="M3 2h6v18H3z" fill="#2878d8"/><path d="M9 7h14l-4 3h-8zM9 12h10l-4 3z" fill="#5a78d0"/><path d="M11 6l10 15" stroke="#111" stroke-width="3"/><circle cx="11" cy="6" r="3" fill="#fff"/><path d="M2 20h7" stroke="#e0b020" stroke-width="2" stroke-dasharray="2 1"/></symbol>
<symbol id="r-tool" viewBox="0 0 24 24"><path d="M9 4l5-3h5l3 4-2 1-3-2-7 12-2-1 6-11-4 1z" fill="#98a0a4" stroke="#444c50"/><path d="M2 9l2 3 3-2 1 4 8 5-2 4-8-5-5-3z" fill="#9aa8c0" stroke="#4c5868"/><ellipse cx="5" cy="21" rx="4" ry="2.500" fill="#f09820"/></symbol>
<symbol id="r-role" viewBox="0 0 24 24"><path d="M1 4l6-3v18l-4 4H1z" fill="#eee" stroke="#777" stroke-width="1.300"/><path d="M7.500 1.500h16v18h-16z" fill="#fff" stroke="#444"/><path d="M10 4h11v11H10z" fill="#e82818"/><path d="M13 4h5v4l3 3v4H10v-4l3-3z" fill="#bcd8f8"/><path d="M10 12h11v3H10z" fill="#2c70d8"/></symbol>

<symbol id="t-ext" viewBox="0 0 16 16"><path d="M1 3l4-2 3 1.500L11 1l4 1.500v11L11 15l-3-1.500L5 15l-4-2z" fill="url(#gOrange)" stroke="#d84818" stroke-width="1.300"/><path d="M5 4v10M8 3v10M11 4v10" stroke="#d86818"/><path d="M1 14l4 1.500 3-2 3 2 4-2" fill="none" stroke="#2438b8"/></symbol>
<symbol id="t-skt" viewBox="0 0 16 16"><path d="M1.500 1.500h5v5h-5zM1.500 9.500h3v5h-3zM6.500 9.500h8v5h-8z" fill="#fff" stroke="#111" stroke-width="1.200"/><path d="M8 8l5-6 2 1.500-5 6-2 .5z" fill="#f8d850" stroke="#8a6410" stroke-width=".7"/><path d="M13 2l1-1.500 2 1.500-1 1.500z" fill="#c22"/></symbol>
<symbol id="t-thr" viewBox="0 0 16 16"><path d="M3 1.500l2-1h6l2 1v3l1 1v6l-2 3.500H4l-2-3.500v-6l1-1z" fill="#c4dcec" stroke="#40586c" stroke-width="1.200"/><path d="M2 5h12M3 8h10M3 10.500h10M3 13h10" stroke="#40586c"/><path d="M8 0v16" stroke="#e01818" stroke-dasharray="4 1"/></symbol>
<symbol id="t-dat" viewBox="0 0 16 16"><path d="M2 1l12 3v11L2 12.500z" fill="url(#gSilver)" stroke="#444"/></symbol>
<symbol id="t-mir" viewBox="0 0 16 16"><path d="M0 8l5-3 4 2v4l-5 2-4-1zM8 8l4-2 4 2v3l-4 3-4-2z" fill="#7090f0" stroke="#3448b8"/><path d="M6 5l6-4-3 9-3 5z" fill="#f8b070" stroke="#e04020"/></symbol>
<symbol id="t-info" viewBox="0 0 16 16"><ellipse cx="8" cy="7" rx="7" ry="6.500" fill="#e4eaf8" stroke="#8090c0"/><path d="M8 6v5M6 6.500h2M6 11h4" stroke="#1c2c7c" stroke-width="1.800"/><circle cx="8" cy="3.500" r="1.300" fill="#1c2c7c"/></symbol>

<symbol id="d-mod" viewBox="0 0 16 16"><path d="M6.500 .5h6l3 3v10h-9z" fill="#eef0ff" stroke="#8890e0"/><path d="M1 8l4-3 3 1v3l3-1 2 1v4l-6 3-6-2z" fill="#4c70d8" stroke="#1c3490"/><path d="M1 8l4-3 3 1-4 3z" fill="#b0c8f8"/></symbol>
<symbol id="d-asm" viewBox="0 0 16 16"><path d="M6.500 .5h6l3 3v10h-9z" fill="#eef0ff" stroke="#6470d8"/><path d="M1 7l4-3 3 1v7l-4 2-3-1z" fill="#9cb4e8" stroke="#405898"/><path d="M5 8l4-2 4 1v5l-4 3-4-1z" fill="#ffd040" stroke="#a87a08"/></symbol>
<symbol id="d-out" viewBox="0 0 16 16"><path d="M2.500 .5h8l3 3v11h-11z" fill="#dfe6fa" stroke="#a0acdc"/><path d="M5 10c0-4 5-4 7-1v3H6z" fill="#9cb8f0" stroke="#7090d8"/></symbol>
<symbol id="d-sm" viewBox="0 0 16 16"><path d="M5.500 .5h7l3 3v11h-10z" fill="#f2f4ff" stroke="#3c4cd0"/><path d="M0 8l5-3 5 2v4l-5 4-5-3z" fill="#7cb8dc" stroke="#286890"/><path d="M0 8l5 2 5-3" fill="none" stroke="#286890"/></symbol>
<symbol id="d-air" viewBox="0 0 16 16"><path d="M2.500 .5h8l3 3v11h-11z" fill="#e4e4f4" stroke="#a0a4cc"/><path d="M5 9l5-1 3 1v3l-4 1-5-1z" fill="#88a0c8"/></symbol>
<symbol id="d-log" viewBox="0 0 16 16"><path d="M3.500 .5h7l3 3v11h-10z" fill="#f2f4ff" stroke="#3c4cd0"/><path d="M3 13h6v-3H3zM6 10V7h3v3l4 3" fill="none" stroke="#e01818" stroke-width="1.600"/><path d="M0 12h3M12 9v6h4" fill="none" stroke="#222"/></symbol>
<symbol id="d-pip" viewBox="0 0 16 16"><path d="M3.500 .5h7l3 3v11h-10z" fill="#f2f4ff" stroke="#3c4cd0"/><path d="M1 5v10h3v-4l4-2 3 4h2l-4-7-5 2V5z" fill="#f8f090" stroke="#222"/></symbol>
<symbol id="d-ele" viewBox="0 0 16 16"><path d="M4.500 .5h7l3 3v11h-10z" fill="#f2f4ff" stroke="#3c4cd0"/><path d="M0 11h6v4H0z" fill="#444"/><path d="M6 11h6v1H6z" fill="#d22"/><path d="M6 12h7v1H6z" fill="#fc0"/><path d="M6 13h6v2H6z" fill="#2a2"/></symbol>
<symbol id="d-blk" viewBox="0 0 16 16"><path d="M2.500 1.500h7l3 3v10h-10z" fill="#f6f7ff" stroke="#3c4cd0" stroke-width="1.200"/></symbol>

<symbol id="up" viewBox="0 0 16 16"><path d="M3.500 12L8 4l4.500 8" fill="none" stroke="#2b88b8" stroke-width="2"/></symbol>
<symbol id="down" viewBox="0 0 16 16"><path d="M3.500 4L8 12l4.500-8" fill="none" stroke="#2b88b8" stroke-width="2"/></symbol>
<symbol id="reset" viewBox="0 0 16 16"><path d="M9 2A6 6 0 1 1 2 8" fill="none" stroke="#fff" stroke-width="2"/><path d="M0 2h6v6z" fill="#fff"/></symbol>
<symbol id="folder" viewBox="0 0 24 24"><path d="M1 7l7-3 2 2 6-2v3l6-1-4 13-16 4z" fill="#f4d648" stroke="#9a8418"/><path d="M1 23l5-11 17-6-5 13z" fill="url(#gYellow)" stroke="#9a8418"/><path d="M8 5c1-5 10-5 11 1h3l-4 5-4-5h2c-1-3-5-3-8-1z" fill="#3aa83a" stroke="#1c7020" stroke-width=".7"/></symbol>

<symbol id="w-start" viewBox="0 0 20 20"><path d="M2 4l7-1v6.500H2zM10 2.800L18 2v7.500h-8zM2 10.500h7V17l-7-1zM10 10.500h8V18l-8-1z" fill="#fff"/></symbol>
<symbol id="w-exp" viewBox="0 0 24 24"><path d="M1 3h8l2 3H1z" fill="#d89a18"/><path d="M1 5h22v17H1z" fill="#fbd066"/><path d="M5 13h14v9h-4v-5H9v5H5z" fill="#3a94dc"/></symbol>
<symbol id="w-edge" viewBox="0 0 24 24"><circle cx="12" cy="12" r="11.500" fill="url(#gEdge)"/><path d="M1 11C2 3 12 2 14 9c-5-3-9 3-5 8 3 4 8 3 11 2-4 5-11 6-15 2-3-3-4-6-4-10z" fill="#1660b8"/><path d="M11 12c1-4 6-4 6 0 0 2-2 2-1 4 2 2 5 1 8-1v9H13c-4-3-4-8-2-12z" fill="#3a3633"/></symbol>
<symbol id="w-alt" viewBox="0 0 20 24"><path d="M6 2l9 5v10l-7 5-3-1v-4l6-4V9L6 7z" fill="none" stroke="#c8aa68" stroke-width="2.800"/></symbol>
<symbol id="w-fox" viewBox="0 0 24 24"><path d="M0 0h24v24H0z" fill="#682274"/><path d="M17 5c-6-4-12 2-9 7 3 4 8 1 8-3h-4" fill="none" stroke="#fff" stroke-width="2.200"/><path d="M8 22v-4h2v2H8M12 18v4h1l1-2-1-2zM16 22v-4h3M16 20h2" fill="none" stroke="#fff"/></symbol>
<symbol id="w-caj" viewBox="0 0 24 24"><path d="M1 1h22v22H1z" fill="#fff" stroke="#5468d8" stroke-width="2"/><path d="M3 3l6 9-6 6z" fill="#28a838"/><path d="M9 3h5v8H9z" fill="#e02890"/><path d="M14 3h5l-2 9z" fill="#3048d8"/><path d="M4 11l6 3 9-7 2 8-7 7z" fill="#f4f4f8" stroke="#aaa"/><path d="M8 17l-4 5 2-7z" fill="#e04020"/></symbol>
<symbol id="w-nx" viewBox="0 0 24 24"><path d="M1 6l5-2 6 12-2 6C4 18 1 12 1 6z" fill="#38a8e8"/><path d="M6 1h11l-5 13z" fill="#e02c2c"/><path d="M20 5c5 5-2 17-11 18 7-5 11-11 11-18z" fill="#2464d0"/><path d="M2 17c7 1 15-3 18-11" fill="none" stroke="#f8d040" stroke-width="2.200"/></symbol>
<symbol id="w-net" viewBox="0 0 20 20"><path d="M6.500 3.500h12v9h-12zM12 13v4M7 17h10" fill="none" stroke="#fff" stroke-width="1.300"/><path d="M1.500 2.500h5v5h-5zM4 8v9h4" fill="#3a3633" stroke="#fff" stroke-width="1.200"/></symbol>
<symbol id="w-vol" viewBox="0 0 20 20"><path d="M2 8h3l4-4v13l-4-4H2zM11 8c1 1 1 4 0 5M13 6c2 2 2 7 0 9M15.500 4c3 3 3 10 0 13" fill="none" stroke="#fff" stroke-width="1.200"/></symbol>
<symbol id="w-up" viewBox="0 0 20 20"><path d="M4 13l6-7 6 7" fill="none" stroke="#fff" stroke-width="1.400"/></symbol>
<symbol id="w-act" viewBox="0 0 20 20"><path d="M1 2h18v13h-4v4l-4-4H1z" fill="#fff"/><path d="M4 5.500h12M4 8.500h12M4 11.500h12" stroke="#3a3633"/></symbol>
<symbol id="st-a" viewBox="0 0 20 20"><path d="M1 1h18v18H1z" fill="#e4e4e4" stroke="#bbb"/><path d="M4 5l5 11M5 5c3-2 5 1 10-1v6c-4 2-5 0-8 1z" fill="#ccc" stroke="#888" stroke-width="1.200"/><path d="M8 4v6M12 5v6" stroke="#888"/></symbol>
</svg>

<div class="app">
    <header class="titlebar">
        <div class="quick">
            <span class="nx">NX</span><i class="vsep"></i>
            <button class="tb"><svg class="ic"><use href="#save"/></svg></button><i class="vsep"></i>
            <button class="tb"><svg class="ic"><use href="#undo"/></svg></button><i class="caret"></i>
            <button class="tb"><svg class="ic"><use href="#redo"/></svg></button><i class="vsep"></i>
            <button class="tb"><svg class="ic"><use href="#cut"/></svg></button>
            <button class="tb"><svg class="ic"><use href="#copy"/></svg></button>
            <button class="tb"><svg class="ic"><use href="#paste"/></svg></button><i class="vsep"></i>
            <button class="tb"><svg class="ic"><use href="#newdoc"/></svg></button><i class="caret"></i><i class="vsep"></i>
            <button class="tb"><svg class="ic"><use href="#eraser"/></svg></button><i class="vsep"></i>
            <button class="tb window-btn"><svg class="ic"><use href="#win"/></svg>窗口</button><i class="caret"></i><i class="caret bar"></i>
        </div>
        <div class="title">专业CNC培训.视频教程请联系QQ-434324903 UG10.0 - 建模 - [固定3.prt]</div>
        <div class="sys">
            <span class="siemens">SIEMENS</span>
            <button class="tb"><svg class="ic"><use href="#min"/></svg></button>
            <button class="tb"><svg class="ic"><use href="#restore"/></svg></button>
            <button class="tb"><svg class="ic"><use href="#close"/></svg></button>
        </div>
    </header>

    <nav class="tabs">
        <button class="file">文件(F)</button>
        <button class="active">主页</button>
        <button>装配</button><button>曲线</button><button>曲面</button><button>分析</button><button>视图</button><button>渲染</button><button>工具</button><button>PMI</button><button>应用模块</button>
        <div class="tabs-right">
            <label class="search"><input type="text" placeholder="查找命令" aria-label="查找命令"><svg class="ic"><use href="#mag"/></svg></label>
            <button class="tb"><svg class="ic"><use href="#full"/></svg></button>
            <button class="tb"><svg class="ic"><use href="#ribup"/></svg></button>
            <button class="tb"><svg class="ic"><use href="#help"/></svg></button>
            <span class="docsys">
                <button class="tb"><svg class="ic"><use href="#min"/></svg></button>
                <button class="tb"><svg class="ic"><use href="#restore"/></svg></button>
                <button class="tb"><svg class="ic"><use href="#close"/></svg></button>
            </span>
        </div>
    </nav>

    <section class="ribbon">
        <div class="group g-sketch">
            <div class="tools">
                <button class="big"><svg><use href="#sketch"/></svg>草图</button>
                <div class="gallery">
                    <button><svg><use href="#spline"/></svg></button><button><svg><use href="#rect"/></svg></button><button><svg><use href="#line"/></svg></button>
                    <button><svg><use href="#arc"/></svg></button><button><svg><use href="#circle"/></svg></button><button><svg><use href="#plus"/></svg></button>
                </div>
                <div class="gal-scroll"><i class="caret flip"></i><i class="caret"></i><i class="caret bar"></i></div>
            </div>
            <div class="foot"><span>直接草图</span><i class="caret"></i></div>
        </div>
        <div class="group g-feature">
            <div class="tools">
                <button class="big w48"><svg><use href="#datum"/></svg>基准平面<i class="caret"></i></button>
                <button class="big"><svg><use href="#extrude"/></svg>拉伸<i class="caret"></i></button>
                <button class="big w36"><svg><use href="#hole"/></svg>孔</button>
                <div class="list">
                    <button><svg><use href="#pattern"/></svg>阵列特征</button>
                    <button><svg><use href="#unite"/></svg>合并<i class="caret"></i></button>
                    <button><svg><use href="#shell"/></svg>抽壳</button>
                </div>
                <button class="big"><svg><use href="#blend"/></svg>边倒圆<i class="caret"></i></button>
                <div class="list">
                    <button><svg><use href="#chamfer"/></svg>倒斜角</button>
                    <button><svg><use href="#trim"/></svg>修剪体</button>
                    <button><svg><use href="#draft"/></svg>拔模</button>
                </div>
                <button class="big more"><svg><use href="#more1"/></svg>更多<i class="caret"></i></button>
            </div>
            <div class="foot"><span>特征</span><i class="caret"></i></div>
        </div>
        <div class="group g-sync">
            <div class="tools">
                <button class="big"><svg><use href="#moveface"/></svg>移动面</button>
                <div class="list">
                    <button><svg><use href="#sync"/></svg>偏置区域</button>
                    <button><svg><use href="#syncrep"/></svg>替换面</button>
                    <button><svg><use href="#syncdel"/></svg>删除面</button>
                </div>
                <button class="big more"><svg><use href="#more2"/></svg>更多<i class="caret"></i></button>
            </div>
            <div class="foot"><span>同步建模</span><i class="caret"></i></div>
        </div>
        <div class="group g-surface">
            <div class="tools"><button class="big"><svg><use href="#surface"/></svg>曲面<i class="caret"></i></button></div>
        </div>
        <div class="group g-std">
            <div class="rows">
                <div><svg><use href="#g-attr"/></svg><svg><use href="#g-layers"/></svg><svg><use href="#g-list"/></svg><i class="vsep"></i><svg><use href="#g-tag"/></svg></div>
                <div><svg><use href="#g-chk"/></svg><svg><use href="#g-chkt"/></svg><svg><use href="#g-chky"/></svg><i class="vsep"></i><svg><use href="#g-exp"/></svg></div>
            </div>
            <div class="foot"><span>标准化工具 - G...</span><i class="caret"></i></div>
        </div>
        <div class="group g-gearing">
            <div class="rows">
                <div><svg><use href="#g-gear"/></svg><svg><use href="#g-gear2"/></svg></div>
                <div><svg><use href="#g-hand"/></svg></div>
            </div>
            <div class="foot"><span>齿轮...</span><i class="caret"></i></div>
        </div>
        <div class="group g-springs">
            <div class="rows">
                <div><svg><use href="#g-spring"/></svg><svg><use href="#g-spring2"/></svg></div>
                <div><svg><use href="#g-disc"/></svg><i class="vsep"></i><svg><use href="#g-snip"/></svg></div>
            </div>
            <div class="foot"><span>弹簧...</span><i class="caret"></i></div>
        </div>
        <div class="group g-machining">
            <div class="rows">
                <div><svg><use href="#g-mach"/></svg><svg><use href="#g-mach2"/></svg></div>
                <div><svg><use href="#g-grid"/></svg><svg><use href="#g-axis"/></svg></div>
            </div>
            <div class="foot"><span>加工...</span><i class="caret"></i></div>
        </div>
        <div class="group g-modeling">
            <div class="rows">
                <div><svg><use href="#g-tri"/></svg><svg><use href="#g-table"/></svg><svg><use href="#g-fold"/></svg><svg><use href="#g-fold2"/></svg></div>
                <div><svg><use href="#g-note"/></svg><svg><use href="#g-brush"/></svg><i class="vsep"></i><span class="fit"><svg><use href="#g-find"/></svg><b>10<em>H7</em></b></span></div>
            </div>
            <div class="foot"><span>建模工具 - G...</span><i class="caret"></i></div>
        </div>
        <div class="group g-p">
            <div class="rows">
                <div><svg><use href="#g-part"/></svg></div>
                <div><svg><use href="#g-part"/></svg></div>
            </div>
            <div class="foot"><span>P..</span><i class="caret"></i></div>
        </div>
        <div class="group g-dims">
            <div class="rows">
                <div>
                    <svg><use href="#g-dim"/></svg><i class="vsep"></i>
                    <span class="tol">1.00</span>
                    <span class="tol">1.00<em>±.05</em></span>
                    <span class="tol">1.00<em>+.05</em><em>-.05</em></span>
                    <span class="tol">1.00<em>+.05</em><s>-.00</s></span>
                    <span class="tol">1.00<s>+.00</s><em>-.05</em></span>
                    <span class="tol box">1.00</span>
                    <span class="tol"><span class="one"><em>(</em>1.00<em>)</em></span></span>
                    <span class="tol blue">10H7</span>
                    <span class="tol blue">10H7<small>(8.01)</small></span>
                    <span class="tol blue">10H7<small>(8.015)</small></span>
                    <span class="tol blue">10<small>(8.015)</small></span>
                </div>
                <div><svg><use href="#g-rd"/></svg><svg><use href="#g-rd2"/></svg><i class="vsep"></i><svg><use href="#g-dia"/></svg><svg><use href="#g-dia2"/></svg><svg><use href="#g-back"/></svg></div>
            </div>
            <div class="foot"><span>尺寸快速格式化工具 - GC工具箱</span><i class="caret"></i></div>
        </div>
        <div class="group g-assembly">
            <div class="tools">
                <button class="big w48" disabled><svg><use href="#procasm"/></svg>处理装配</button>
                <button class="big"><svg><use href="#addasm"/></svg>添加<i class="caret"></i></button>
                <div class="list">
                    <button><svg><use href="#a-con"/></svg>装配约束</button>
                    <button><svg><use href="#a-mov"/></svg>移动组件</button>
                    <button><svg><use href="#a-pat"/></svg>阵列组件</button>
                </div>
            </div>
            <div class="foot"><span>装配</span><i class="caret"></i></div>
        </div>
        <i class="caret end"></i>
    </section>

    <section class="selbar">
        <button class="menu-btn"><svg><use href="#s-menu"/></svg>菜单(<u>M</u>)<i class="caret"></i></button>
        <i class="vsep"></i>
        <span class="combo c1"><select aria-label="类型过滤器"><option></option></select></span>
        <span class="combo c2"><select aria-label="选择范围"><option>仅在工作部件内</option></select></span>
        <div class="strip">
            <svg><use href="#s-a"/></svg><svg><use href="#s-b"/></svg><svg><use href="#s-c"/></svg><i class="caret"></i>
            <svg><use href="#s-d"/></svg><svg><use href="#s-e"/></svg><svg><use href="#s-f"/></svg><i class="caret"></i>
            <svg><use href="#s-g"/></svg><svg><use href="#s-h"/></svg><svg><use href="#s-i"/></svg>
            <svg><use href="#s-l1"/></svg><svg><use href="#s-l2"/></svg><svg><use href="#s-cv"/></svg><svg><use href="#s-zz"/></svg><svg><use href="#s-int"/></svg><svg><use href="#s-cc"/></svg><svg><use href="#s-cq"/></svg><svg><use href="#s-pl"/></svg><svg><use href="#s-l3"/></svg><svg><use href="#s-sf"/></svg><svg><use href="#s-gr"/></svg>
        </div>
        <i class="vsep"></i>
        <div class="strip">
            <svg><use href="#v-fit"/></svg><svg><use href="#v-pan"/></svg><svg><use href="#v-rot"/></svg><svg><use href="#v-grid"/></svg><i class="caret"></i>
            <svg><use href="#v-sec"/></svg><i class="caret"></i><svg><use href="#v-cube"/></svg><i class="caret"></i><svg><use href="#v-flip"/></svg><i class="caret"></i>
        </div>
        <i class="vsep"></i>
        <i class="caret end"></i>
    </section>

    <main class="work">
        <nav class="rail">
            <button class="gear"><svg><use href="#r-gear"/></svg></button>
            <button><svg><use href="#r-asm"/></svg></button>
            <button><svg><use href="#r-con"/></svg></button>
            <button class="on"><svg><use href="#r-part"/></svg></button>
            <button><svg><use href="#r-books"/></svg></button>
            <button class="apart"><svg><use href="#r-info"/></svg></button>
            <button class="apart"><svg><use href="#r-doc"/></svg></button>
            <button class="apart"><svg><use href="#r-clock"/></svg></button>
            <button><svg><use href="#r-wand"/></svg></button>
            <button><svg><use href="#r-wand2"/></svg></button>
            <button><svg><use href="#r-tool"/></svg></button>
            <button><svg><use href="#r-role"/></svg></button>
        </nav>

        <aside class="navigator">
            <div class="nav-title">部件导航器<button class="max" aria-label="最大化"></button></div>
            <div class="tree-box">
                <div class="tree-view">
                    <table class="tree">
                        <thead><tr><th>名称<i class="sort"></i></th><th>最新</th><th>附注</th></tr></thead>
                        <tbody id="treeRows"></tbody>
                    </table>
                    <div class="vscroll"><i class="chev u"></i><span class="thumb"></span><i class="chev d"></i></div>
                </div>
                <div class="hscroll"><i class="chev l"></i><span class="thumb"></span><i class="chev r"></i></div>
            </div>
            <div class="splitter"></div>
            <button class="fold">相依性<svg><use href="#down"/></svg></button>
            <button class="fold">细节<svg><use href="#down"/></svg></button>
            <button class="fold">预览<svg><use href="#down"/></svg></button>
        </aside>

        <div class="canvas">
            <svg class="triad" viewBox="0 0 64 64">
                <path d="M11 20h24l4-3v26l-4 6H11z" fill="#d0d1d2" stroke="#b4b4b4"/><path d="M11 17h28M35 20v29M11 43h24l4 6" fill="none" stroke="#b4b4b4"/>
                <text x="11" y="42" class="ax-x">X</text>
                <path d="M9 49V16" stroke="#1e7a1e" stroke-width="3"/><path d="M9 6l3 11H6z" fill="#1e7a1e"/>
                <path d="M9 49h34" stroke="#0a3cf0" stroke-width="3"/><path d="M54 49.500l-12 3v-6z" fill="#0a3cf0"/>
                <circle cx="9" cy="49" r="4" fill="#c8c8c8" stroke="#888" stroke-width=".5"/><circle cx="8" cy="48" r="1.500" fill="#fff"/>
            </svg>
            <span class="axis ay">Y</span><span class="axis az">Z</span>

            <form class="dialog">
                <div class="dlg-title"><span>新建</span><button type="button" aria-label="重置"><svg><use href="#reset"/></svg></button><button type="button" aria-label="关闭"><svg class="x"><use href="#close"/></svg></button></div>
                <div class="dlg-tabs top">
                    <button type="button">Mechatronics Concept Designer</button><button type="button">Ship Structures</button><button type="button">流水线设计器</button>
                </div>
                <div class="dlg-tabs low">
                    <button type="button" class="active">模型</button><button type="button">Model</button><button type="button">图纸</button><button type="button">Drawing</button><button type="button">Simulation</button><button type="button">Manufacturing</button><button type="button">Inspection</button>
                </div>
                <div class="page">
                    <div class="cols">
                        <div class="left">
                            <div class="head">模板<svg><use href="#up"/></svg></div>
                            <div class="filter">
                                <div class="head small">过滤器<svg><use href="#up"/></svg></div>
                                <div class="unit"><label for="unit">单位</label><span class="combo"><select id="unit"><option>毫米</option></select></span></div>
                            </div>
                            <div class="tpl-box">
                                <table class="tpl">
                                    <thead><tr><th>名称</th><th>类型</th><th>单位</th><th>关系</th><th>所有者</th><th></th></tr></thead>
                                    <tbody id="tplRows"></tbody>
                                </table>
                            </div>
                        </div>
                        <div class="right">
                            <div class="head">预览<svg><use href="#up"/></svg></div>
                            <div class="preview">
                                <svg viewBox="0 0 245 183">
                                    <g fill="none" stroke="#000" stroke-width="1.800">
                                        <path d="M22 138V77M22 138l55-16M22 138l50 23"/>
                                        <path d="M22 48l7 26c-3 3-10 3-13 0zM99 114l-18 11c-6-2-6-9-2-11zM91 171l-15-13c-5 2-6 8-3 12z"/>
                                        <ellipse cx="78" cy="120" rx="4" ry="6"/>
                                        <path d="M22 98l38-12v42l35 15-38 12M22 98l29 10v44" stroke-dasharray="5 3"/>
                                    </g>
                                    <g stroke="#0a3cc8" stroke-width="2" stroke-linejoin="round">
                                        <path d="M175 24l26-11 16 6v23l15 5v20l-27 11-30-12z" fill="url(#gFace)"/>
                                        <path d="M175 24l26-11 16 6-25 11z" fill="#dfeaff"/>
                                        <path d="M192 30l25-11v23l-25 11z" fill="#2a50f4"/>
                                        <path d="M192 53l25-11 15 5-27 11z" fill="#a4b0ff"/>
                                        <path d="M205 58l27-11v20l-27 11z" fill="#0c62c8"/>
                                    </g>
                                    <g class="labels"><text x="31" y="61">Z</text><text x="100" y="114">Y</text><text x="96" y="171">X</text></g>
                                </svg>
                            </div>
                            <div class="head ruled">属性<svg><use href="#up"/></svg></div>
                            <dl class="props">
                                <div><dt>名称:</dt><dd>模型</dd></div>
                                <div><dt>类型:</dt><dd>建模</dd></div>
                                <div><dt>单位:</dt><dd>毫米</dd></div>
                                <div><dt>上次修改时间:</dt><dd>11/30/2012 02:32 下午</dd></div>
                                <div><dt>描述:</dt><dd>带基准 CSYS 的 NX 示例</dd></div>
                            </dl>
                        </div>
                    </div>
                    <div class="block">
                        <div class="head">新文件名<svg><use href="#up"/></svg></div>
                        <div class="field"><label for="fname">名称</label><input id="fname" type="text" value="导入stp.prt"><button type="button" class="browse" aria-label="浏览名称"><svg><use href="#folder"/></svg></button></div>
                        <div class="field"><label for="fdir">文件夹</label><input id="fdir" type="text" value="E:\UG10.0建模\固定位移传感器\"><button type="button" class="browse focus" aria-label="浏览文件夹"><svg><use href="#folder"/></svg></button></div>
                    </div>
                    <div class="block">
                        <div class="head">要引用的部件<svg><use href="#up"/></svg></div>
                        <div class="field ref"><label for="fref">名称</label><input id="fref" type="text" disabled><button type="button" class="browse" disabled aria-label="浏览部件"><svg><use href="#folder"/></svg></button></div>
                    </div>
                </div>
                <div class="dlg-foot"><button type="button" class="ok">确定</button><button type="button">取消</button></div>
            </form>

            <div class="meter"><i class="idle"></i><i class="live"></i></div>
        </div>
    </main>

    <div class="statusbar"><svg><use href="#st-a"/></svg><svg><use href="#full"/></svg></div>

    <footer class="taskbar">
        <button class="pin"><svg><use href="#w-start"/></svg></button>
        <button class="pin"><svg class="white"><use href="#mag"/></svg></button>
        <button class="pin"><svg class="wide"><use href="#w-exp"/></svg></button>
        <button class="task"><svg><use href="#w-edge"/></svg>写文章-CSDN创作...</button>
        <button class="task"><svg><use href="#w-alt"/></svg>断路器振动.PrjPCB...</button>
        <button class="task"><svg><use href="#w-alt"/></svg>采集信号.PrjPcb - ...</button>
        <button class="task"><svg><use href="#w-fox"/></svg>链接头_位移_尺寸....</button>
        <button class="task"><svg><use href="#w-caj"/></svg>CAJViewer 7.2 - [...</button>
        <button class="task current"><svg><use href="#w-nx"/></svg>专业CNC培训.视频...</button>
        <div class="tray">
            <svg><use href="#w-up"/></svg><svg><use href="#w-net"/></svg><svg><use href="#w-vol"/></svg><span>英</span><span class="ime">拼</span>
            <div class="clock">16:41:57<br>2022/8/26</div>
            <svg><use href="#w-act"/></svg>
            <div class="mark">CSDN @千山万寻</div>
        </div>
    </footer>
</div>

<script>
    // Part navigator rows: [icon, label, has info flag]
    var names = {ext: '拉伸', skt: '草图', thr: '螺纹', dat: '基准平面', pat: '阵列特征 [线性]', mir: '镜像特征'};
    var special = {79: 'skt', 80: 'dat', 81: 'pat', 82: 'ext', 83: 'mir'};
    var flagged = [65, 71, 73, 75];
    var html = '';
    for (var n = 59; n <= 93; n++) {
        var kind = special[n] || (n > 75 ? 'thr' : (n % 2 ? 'ext' : 'skt'));
        var icon = kind === 'pat' ? 'pattern' : 't-' + kind;
        var info = flagged.indexOf(n) > -1;
        html += '<tr><td><div class="node' + (info ? ' info' : '') + '">' +
            (kind === 'pat' ? '<span class="expand">+</span>' : '') +
            '<input type="checkbox" checked id="n' + n + '">' +
            (info ? '<svg class="flag"><use href="#t-info"/></svg>' : '') +
            '<svg><use href="#' + icon + '"/></svg>' +
            '<label for="n' + n + '">' + names[kind] + ' (' + n + ')' + (kind === 'skt' ? ' "SKETCH_...' : '') + '</label></div></td>' +
            '<td><i class="tick"></i></td><td></td></tr>';
    }
    document.getElementById('treeRows').innerHTML = html;

    // Template list
    var templates = [
        ['mod', '模型', '建模'], ['asm', '装配', '装配'], ['out', '外观造型设计', '外观造型设计'],
        ['sm', 'NX 钣金', '钣金'], ['air', '航空钣金', '航空钣金'], ['log', '逻辑布线', '逻辑管线布置'],
        ['pip', '机械布管', '机械管线布置'], ['ele', '电气布线', '电气管线布置'], ['blk', '空白', '基本环境']
    ];
    html = '';
    for (var i = 0; i < 14; i++) {
        var t = templates[i];
        html += '<tr' + (i === 0 ? ' class="selected"' : '') + '>';
        html += t ? '<td><div class="name"><svg><use href="#d-' + t[0] + '"/></svg><span>' + t[1] + '</span></div></td><td>' + t[2] +
            '</td><td>毫米</td><td>独立的</td><td>' + (t[0] === 'blk' ? '无' : 'NT AUTH...') + '</td><td></td>'
            : '<td></td><td></td><td></td><td></td><td></td><td></td>';
        html += '</tr>';
    }
    document.getElementById('tplRows').innerHTML = html;
</script>
</body>
</html>
```

FILE: styles.css
```css
* {
    box-sizing: border-box;
}
body {
    margin: 0;
    font-family: "Noto Sans", "Noto Sans CJK SC", sans-serif;
    font-size: 12px;
    line-height: 16px;
    color: #1e1e1e;
    background-color: #fff;
}
button, input, select {
    font: inherit;
    color: inherit;
}
button {
    padding: 0;
    border: none;
    background: none;
    white-space: nowrap;
}
svg {
    display: block;
    flex: none;
}
.sprite {
    position: absolute;
    width: 0;
    height: 0;
}
.app {
    display: flex;
    flex-direction: column;
    height: 100vh;
    overflow: hidden;
}
.ic {
    width: 18px;
    height: 18px;
}
.vsep {
    flex: none;
    width: 1px;
    height: 22px;
    background-color: #d8d8d8;
}
.caret {
    flex: none;
    width: 6px;
    height: 3px;
    background-color: #222;
    clip-path: polygon(0 0, 100% 0, 50% 100%);
}
.caret.flip {
    background-color: #999;
    clip-path: polygon(0 100%, 100% 100%, 50% 0);
}
.caret.bar {
    height: 7px;
    clip-path: polygon(0 0, 100% 0, 100% 15%, 0 15%, 0 50%, 100% 50%, 50% 100%, 0 50%);
}

/* Title bar */
.titlebar {
    display: flex;
    align-items: center;
    flex: none;
    height: 26px;
    font-size: 13px;
}
.quick {
    display: flex;
    align-items: center;
    gap: 5px;
    width: 344px;
    padding-left: 3px;
}
.nx {
    font: bold 23px/22px "Liberation Sans", sans-serif;
    color: #8298a8;
    width: 34px;
}
.tb {
    display: flex;
    align-items: center;
}
.quick .vsep {
    margin: 0 2px 0 0;
}
.quick .window-btn {
    gap: 2px;
    font-size: 11px;
}
.title {
    flex: 1;
    margin-left: 16px;
    text-align: center;
    color: #000;
    white-space: nowrap;
}
.sys {
    display: flex;
    align-items: center;
    justify-content: flex-end;
    gap: 6px;
    width: 154px;
    padding-right: 4px;
    color: #444;
}
.siemens {
    flex: 1;
    font: bold 14px/16px "Open Sans", "Noto Sans", sans-serif;
    color: #009999;
}

/* Ribbon tabs */
.tabs {
    display: flex;
    flex: none;
    height: 28px;
    font-size: 13px;
    background-color: #c8d7d5;
}
.tabs > button {
    padding: 0 13px;
}
.tabs > .file {
    width: 81px;
    margin-right: 2px;
    padding-right: 15px;
    color: #fff;
    background-color: #5c8680;
}
.tabs > .active {
    color: #2b88b8;
    background-color: #fff;
    border-top: 1px solid #aab4b4;
}
.tabs-right {
    display: flex;
    align-items: center;
    gap: 8px;
    margin-left: auto;
    padding-right: 6px;
}
.docsys {
    display: flex;
    gap: 4px;
    margin-left: -5px;
    color: #111;
}
.search {
    display: flex;
    align-items: center;
    width: 125px;
    height: 20px;
    margin-right: 1px;
    padding: 0 2px;
    background-color: #fff;
    border: 1px solid #9aa4a4;
}
.search input {
    flex: 1;
    min-width: 0;
    padding: 0;
    font-size: 11px;
    border: none;
    outline: none;
}
.search input::placeholder {
    color: #a0a0a0;
}

/* Ribbon */
.ribbon {
    display: flex;
    flex: none;
    height: 94px;
    padding-top: 5px;
    font-size: 11px;
    border-bottom: 1px solid #d0d0d0;
}
.group {
    display: flex;
    flex-direction: column;
    flex: none;
    height: 84px;
    border-right: 1px solid #d4d4d4;
}
.g-sketch { width: 178px; }
.g-feature { width: 369px; }
.g-sync { width: 172px; }
.g-surface { width: 43px; }
.g-std { width: 104px; }
.g-gearing { width: 52px; }
.g-springs { width: 58px; }
.g-machining { width: 52px; }
.g-modeling { width: 99px; }
.g-p { width: 29px; }
.g-dims { width: 287px; }
.g-assembly { width: 181px; }
.tools {
    display: flex;
    flex: 1;
    gap: 2px;
    padding-left: 10px;
}
.g-sync .tools {
    padding-left: 8px;
}
.g-surface .tools {
    padding-left: 1px;
}
.big {
    display: flex;
    flex-direction: column;
    align-items: center;
    width: 40px;
    font-size: 11px;
    line-height: 14px;
}
.big > svg {
    width: 31px;
    height: 31px;
    margin: 0 0 6px;
}
.big .caret {
    margin-top: 6px;
}
.w48 {
    width: 48px;
}
.w36 {
    width: 36px;
}
.big:disabled {
    color: #b8b8b8;
}
.more {
    margin-left: 6px;
}
.more > svg {
    width: 38px;
    height: 34px;
    margin: 0 0 3px;
    padding: 9px;
    border: 1px solid #e8e8e8;
    border-radius: 3px;
}
.gallery {
    display: grid;
    grid-template-columns: repeat(3, 1fr);
    width: 98px;
    height: 66px;
    border: 1px solid #c8c8c8;
}
.gallery button {
    display: flex;
    align-items: center;
    justify-content: center;
}
.gallery svg {
    width: 23px;
    height: 21px;
}
.gal-scroll {
    display: flex;
    flex-direction: column;
    justify-content: space-around;
    height: 66px;
}
.g-sketch .tools {
    gap: 7px;
}
.list {
    display: flex;
    flex-direction: column;
    gap: 6px;
    padding: 0 2px 0 4px;
}
.list button {
    display: flex;
    align-items: center;
    gap: 4px;
    height: 16px;
}
.list svg {
    width: 16px;
    height: 16px;
}
.list .caret {
    margin-left: 4px;
}
.foot {
    display: flex;
    align-items: center;
    height: 12px;
    padding: 0 7px 0 2px;
    line-height: 14px;
    color: #2b88b8;
    white-space: nowrap;
}
.foot span {
    flex: 1;
    text-align: center;
}
.g-p .foot {
    padding: 0 6px 0 1px;
}
.rows {
    display: flex;
    flex-direction: column;
    flex: 1;
    gap: 10px;
    padding: 6px 0 0 6px;
}
.rows > div {
    display: flex;
    align-items: center;
    gap: 3px;
    height: 20px;
}
.rows svg {
    width: 20px;
    height: 20px;
}
.g-p .rows {
    padding-left: 4px;
}
.fit {
    display: flex;
    flex-direction: column;
    align-items: center;
    width: 26px;
}
.fit svg {
    height: 11px;
}
.fit b, .tol {
    font: 8px/9px "Liberation Sans", sans-serif;
}
.tol {
    display: flex;
    flex-direction: column;
    align-items: center;
    justify-content: center;
    width: 20px;
    line-height: 7px;
    color: #333;
}
.tol em, .fit em {
    font-style: normal;
    color: #b83030;
}
.tol s {
    color: #999;
    text-decoration: none;
}
.tol.box {
    height: 12px;
    border: 1px solid #b83030;
}
.tol.blue {
    font-size: 7px;
    color: #3c3cb0;
}
.tol small {
    font-size: 6px;
}
.ribbon .end, .selbar .end {
    margin-left: auto;
    margin-right: 6px;
}
.ribbon .end {
    align-self: flex-end;
    margin-bottom: 8px;
}

/* Selection bar */
.selbar {
    display: flex;
    align-items: center;
    flex: none;
    height: 32px;
    border-bottom: 1px solid #8c9090;
}
.selbar > .vsep {
    height: 24px;
}
.menu-btn {
    display: flex;
    align-items: center;
    width: 87px;
    padding-left: 10px;
    font-size: 11px;
}
.menu-btn svg {
    width: 17px;
    height: 16px;
    margin-right: 3px;
}
.menu-btn .caret {
    margin-left: 6px;
}
.combo {
    position: relative;
    display: block;
}
.combo::after {
    content: "";
    position: absolute;
    right: 6px;
    top: 50%;
    width: 8px;
    height: 4px;
    margin-top: -1px;
    background-color: #222;
    clip-path: polygon(0 0, 100% 0, 50% 100%);
    pointer-events: none;
}
.combo select {
    appearance: none;
    display: block;
    width: 100%;
    height: 20px;
    padding: 0 3px;
    font-size: 11px;
    background-color: #fff;
    border: 1px solid #a0a0a0;
    border-radius: 0;
}
.c1 {
    width: 133px;
    margin-left: 11px;
}
.c2 {
    width: 140px;
    margin: 0 8px;
}
.strip {
    display: flex;
    align-items: center;
    gap: 5px;
}
.strip svg {
    width: 20px;
    height: 18px;
}
.strip + .vsep {
    margin: 0 12px 0 6px;
}

/* Work area */
.work {
    display: flex;
    flex: 1;
    min-height: 0;
    border-bottom: 1px solid #a8a8a8;
}
.rail {
    display: flex;
    flex-direction: column;
    flex: none;
    width: 32px;
    background-color: #dcdcdc;
    border-right: 1px solid #a8a8a8;
}
.rail button {
    display: flex;
    align-items: center;
    justify-content: center;
    height: 42px;
    padding-left: 4px;
}
.rail .gear {
    height: 26px;
    margin-bottom: 15px;
    padding: 0;
}
.rail .gear svg {
    width: 14px;
    height: 14px;
}
.rail .on {
    margin: 0 -1px 0 2px;
    padding-left: 1px;
    background-color: #fff;
    border: 1px solid #a8a8a8;
    border-right: none;
}
.rail .apart {
    margin-top: 12px;
}
.rail svg {
    width: 23px;
    height: 23px;
}

/* Part navigator */
.navigator {
    display: flex;
    flex-direction: column;
    flex: none;
    width: 358px;
    padding: 0 9px 7px 6px;
    background-color: #fff;
    border-right: 1px solid #8c9090;
}
.nav-title {
    display: flex;
    align-items: center;
    justify-content: space-between;
    height: 28px;
    padding: 2px 7px 0 4px;
}
.max {
    width: 12px;
    height: 11px;
    border: 1px solid #222;
    border-top-width: 2px;
}
.tree-box {
    display: flex;
    flex-direction: column;
    flex: 1;
    min-height: 0;
    padding: 1px;
    border: 1px solid #d0d0d0;
}
.tree-view {
    position: relative;
    flex: 1;
    min-height: 0;
    overflow: hidden;
}
table {
    width: 100%;
    table-layout: fixed;
    border-collapse: separate;
    border-spacing: 0;
}
th {
    padding: 0 6px;
    font-weight: normal;
    text-align: left;
    background-color: #efefef;
    border-right: 1px solid #d0d0d0;
    border-bottom: 1px solid #d0d0d0;
}
td {
    padding: 0;
    border-right: 1px solid #e8e8e8;
    border-bottom: 1px solid #e8e8e8;
}
th:last-child, td:last-child {
    border-right: none;
}
.tree th {
    height: 21px;
    padding-top: 2px;
}
.tree th:nth-child(1) { width: 200px; }
.tree th:nth-child(2) { width: 100px; }
.tree td {
    height: 20px;
}
tbody tr:nth-child(even) {
    background-color: #fafafa;
}
.sort {
    display: inline-block;
    width: 9px;
    height: 5px;
    margin: 0 0 2px 18px;
    background-color: #222;
    clip-path: polygon(50% 0, 100% 100%, 0 100%);
}
.node {
    position: relative;
    display: flex;
    align-items: center;
    gap: 3px;
    height: 19px;
    margin-left: 28px;
    padding-left: 12px;
    color: #999;
    white-space: nowrap;
}
.node::before {
    content: "";
    position: absolute;
    left: 0;
    top: 0;
    width: 9px;
    height: 20px;
    border-left: 1px dotted #888;
    background: linear-gradient(90deg, #aaa 50%, transparent 50%) 0 10px / 2px 1px repeat-x;
}
.node svg {
    width: 15px;
    height: 15px;
}
.node input {
    appearance: none;
    flex: none;
    width: 12px;
    height: 12px;
    margin: 0;
    background-color: #fff;
    border: 1px solid #000;
}
.node input::before, .tick {
    content: "";
    display: block;
    width: 10px;
    height: 10px;
    background-color: #14b428;
    clip-path: polygon(0 50%, 20% 40%, 38% 62%, 85% 5%, 100% 15%, 42% 100%, 30% 100%);
}
.tick {
    width: 12px;
    height: 12px;
    margin-left: 6px;
}
.node.info input {
    margin: 5px -1px 0 1px;
}
.node .flag {
    position: absolute;
    left: 10px;
    top: 1px;
    width: 12px;
    height: 12px;
}
.expand {
    position: absolute;
    left: -4px;
    top: 5px;
    width: 9px;
    height: 9px;
    font: 10px/8px "Liberation Sans", sans-serif;
    text-align: center;
    color: #000;
    background-color: #fff;
    border: 1px solid #ccc;
}
.vscroll {
    position: absolute;
    right: 0;
    top: 21px;
    bottom: 0;
    display: flex;
    flex-direction: column;
    align-items: center;
    width: 16px;
    background-color: #f0f0f0;
}
.vscroll .thumb {
    width: 15px;
    height: 29%;
    margin-top: auto;
    margin-bottom: 75px;
    background-color: #cdcdcd;
}
.hscroll {
    display: flex;
    align-items: center;
    flex: none;
    height: 16px;
    padding-right: 17px;
    background-color: #f0f0f0;
}
.hscroll .thumb {
    width: 230px;
    height: 15px;
    margin: 0 auto 0 2px;
    background-color: #cdcdcd;
}
.chev {
    flex: none;
    width: 6px;
    height: 6px;
    margin: 6px;
    border: solid #555;
    border-width: 2px 0 0 2px;
}
.chev.u { transform: rotate(45deg); }
.chev.d { transform: rotate(225deg); }
.chev.l { transform: rotate(-45deg); margin-right: 3px; }
.chev.r { transform: rotate(135deg); }
.splitter {
    flex: none;
    height: 5px;
    margin-top: 1px;
    background-color: #dcdcdc;
    border: 1px solid #a8a8a8;
}
.fold {
    display: flex;
    align-items: center;
    justify-content: space-between;
    flex: none;
    height: 24px;
    padding: 4px 3px 0 7px;
    font-size: 14px;
    color: #2b88b8;
    border-bottom: 2px solid #d0d0d0;
}
.fold svg, .head svg {
    width: 16px;
    height: 14px;
}

/* Graphics window */
.canvas {
    position: relative;
    flex: 1;
    overflow: hidden;
    background: linear-gradient(#b2b3b5, #c9cacc 25%, #dddedf 58%, #e6e8ea 82%);
}
.triad {
    position: absolute;
    left: 57px;
    bottom: 53px;
    width: 64px;
    height: 64px;
}
.ax-x {
    font: 12px "Liberation Sans", sans-serif;
    fill: #d89c9c;
}
.axis {
    position: absolute;
    font: 12px/12px "Liberation Sans", sans-serif;
}
.ay {
    left: 61px;
    bottom: 110px;
    color: #2c842c;
}
.az {
    left: 113px;
    bottom: 61px;
    color: #2c50f0;
}
.meter {
    position: absolute;
    right: 0;
    top: 492px;
    display: flex;
    flex-direction: column;
    width: 10px;
    height: 59px;
    padding: 7px 2px 6px 3px;
    background-color: #505868;
    border: 1px solid #30343e;
    border-right: none;
    border-radius: 4px 0 0 4px;
}
.meter i {
    flex: 5;
    background: repeating-linear-gradient(#2c303c 0 1px, transparent 1px 2px);
}
.meter .live {
    flex: 4;
    background: repeating-linear-gradient(transparent 0 1px, #505868 1px 2px), linear-gradient(#e0e080, #60d8c8);
}

/* New file dialog */
.dialog {
    position: absolute;
    left: 149px;
    top: 37px;
    width: 813px;
    background-color: #e8e8e8;
    border: 1px solid #a8a8a8;
    border-top: none;
}
.dlg-title {
    display: flex;
    align-items: center;
    gap: 4px;
    height: 28px;
    margin: 0 -1px 6px;
    padding: 0 4px 2px 9px;
    color: #fff;
    background-color: #5c8680;
}
.dlg-title span {
    flex: 1;
    padding-top: 2px;
}
.dlg-title svg {
    width: 13px;
    height: 13px;
}
.dlg-title .x {
    width: 19px;
    height: 19px;
}
.dlg-tabs {
    display: grid;
    margin: 0 11px;
}
.dlg-tabs button {
    height: 28px;
    border: 1px solid #d0d0d0;
    border-bottom: none;
}
.dlg-tabs.top {
    grid-template-columns: 334fr 236fr 219fr;
}
.dlg-tabs.low {
    grid-template-columns: 101px 97fr 97fr 109fr 122fr 144fr 121fr;
    margin-left: 9px;
}
.dlg-tabs .active {
    position: relative;
    height: 31px;
    margin: -2px 0 -1px;
    color: #2b88b8;
    background-color: #fff;
    border-color: #b8b8b8;
}
.page {
    margin: 0 9px;
    padding: 0 4px 8px;
    background-color: #fff;
    border: 1px solid #b8b8b8;
}
.cols {
    display: flex;
    align-items: flex-start;
}
.left {
    width: 518px;
    padding: 0 9px 7px;
    border-bottom: 1px solid #c8c8c8;
}
.right {
    flex: 1;
    padding: 0 9px 7px;
    border-bottom: 1px solid #c8c8c8;
}
.head {
    display: flex;
    align-items: center;
    justify-content: space-between;
    height: 30px;
    margin: 0 -8px 2px -5px;
    padding: 0 3px;
    font-size: 14px;
    color: #2b88b8;
}
.head.small {
    height: 22px;
    margin: 0;
    padding: 0 0 0 8px;
    font-size: 12px;
}
.right .head {
    margin-left: -2px;
    margin-right: -5px;
    padding-left: 0;
    padding-right: 0;
}
.filter {
    height: 64px;
    margin-bottom: 3px;
    background-color: #f0f6f6;
    border: 1px solid #d8dcdc;
}
.filter .head svg {
    width: 21px;
    height: 13px;
}
.unit {
    display: flex;
    align-items: center;
    justify-content: flex-end;
    gap: 5px;
    padding: 7px 8px 0 0;
}
.unit .combo {
    width: 141px;
}
.unit select {
    height: 25px;
    padding: 0 4px;
    font-size: 12px;
}
.tpl-box {
    height: 291px;
    padding: 1px;
    border: 1px solid #d8d8d8;
    overflow: hidden;
}
.tpl th {
    height: 20px;
}
.tpl td {
    height: 20px;
    padding: 0 4px;
    white-space: nowrap;
}
.tpl th:nth-child(1) { width: 135px; }
.tpl th:nth-child(2) { width: 100px; }
.tpl th:nth-child(3) { width: 70px; }
.tpl th:nth-child(4) { width: 115px; }
.tpl th:nth-child(5) { width: 75px; }
.tpl th:nth-child(6) { width: 1px; padding: 0; }
.tpl td:nth-child(1), .tpl td:nth-child(6) {
    padding: 0;
}
.name {
    display: flex;
    align-items: center;
    height: 19px;
}
.name svg {
    width: 15px;
    height: 15px;
    margin-right: 1px;
}
.name span {
    flex: 1;
    padding-left: 3px;
}
.selected td:not(:first-child):not(:last-child), .selected .name span {
    color: #fff;
    background-color: #3296ff;
    line-height: 19px;
}
.preview {
    height: 185px;
    margin-bottom: 8px;
    background: linear-gradient(#909090, #c0c0c0 32%, #fff 92%);
    border: 1px solid #5a5a5a;
}
.preview svg {
    width: 245px;
    height: 183px;
}
.labels {
    font: 15px "Liberation Sans", sans-serif;
}
.right .ruled {
    position: relative;
    height: 32px;
    margin-bottom: 1px;
    padding-top: 2px;
}
.right .ruled::before {
    content: "";
    position: absolute;
    left: -7px;
    right: -4px;
    top: 0;
    height: 1px;
    background-color: #c8c8c8;
}
.props {
    margin: 0;
}
.props div {
    display: flex;
    gap: 12px;
    height: 23px;
    line-height: 23px;
}
.props dd {
    margin: 0;
}
.block {
    padding: 1px 9px 7px;
    border-bottom: 1px solid #c8c8c8;
}
.block .head {
    margin-right: -5px;
    padding-right: 0;
}
.field {
    display: flex;
    align-items: center;
    gap: 4px;
    margin-bottom: 2px;
}
.field:last-child {
    margin-bottom: 0;
}
.field label {
    width: 37px;
    white-space: nowrap;
}
.field input {
    width: 462px;
    height: 24px;
    padding: 0 4px;
    border: 1px solid #a8a8a8;
}
.browse {
    display: flex;
    align-items: center;
    justify-content: center;
    width: 32px;
    height: 32px;
    background-color: #fff;
    border: 1px solid #a8a8a8;
}
.browse svg {
    width: 24px;
    height: 24px;
}
.browse.focus {
    outline: 1px dotted #333;
    outline-offset: -4px;
}
.ref label {
    align-self: flex-start;
    width: 25px;
    line-height: 24px;
    color: #a0a0a0;
}
.ref input {
    align-self: flex-start;
    width: 282px;
    background-color: #f0f0f0;
    border-color: #d4d4d4;
}
.browse:disabled {
    border-color: #c8c8c8;
}
.browse:disabled svg {
    filter: grayscale(.8) brightness(.85);
    opacity: .6;
}
.dlg-foot {
    display: flex;
    justify-content: flex-end;
    gap: 5px;
    padding: 13px 15px;
}
.dlg-foot button {
    width: 54px;
    height: 25px;
    background-color: #c9cbd0;
    border: 1px solid #adb0b4;
}
.dlg-foot .ok {
    background-color: #98cce8;
    border-color: #46a0d4;
}

/* Status bar and task bar */
.statusbar {
    display: flex;
    align-items: center;
    justify-content: flex-end;
    flex: none;
    gap: 4px;
    height: 21px;
    padding-right: 55px;
}
.statusbar svg {
    width: 16px;
    height: 16px;
}
.taskbar {
    display: flex;
    flex: none;
    height: 40px;
    color: #fff;
    background-color: #3a3633;
}
.pin {
    display: flex;
    align-items: center;
    justify-content: center;
    width: 48px;
}
.pin svg {
    width: 20px;
    height: 20px;
}
.pin .white {
    color: #fff;
    width: 18px;
}
.pin .wide {
    width: 23px;
}
.task {
    display: flex;
    align-items: center;
    gap: 4px;
    width: 152px;
    margin-left: 9px;
    padding-left: 6px;
    border-bottom: 2px solid #76b9ed;
}
.pin + .task {
    margin-left: 7px;
}
.task svg {
    width: 24px;
    height: 24px;
}
.task.current {
    width: 160px;
    margin-left: 5px;
    padding-left: 8px;
    background-color: #5f5c59;
}
.tray {
    position: relative;
    display: flex;
    align-items: center;
    gap: 7px;
    margin-left: auto;
    padding-right: 23px;
    font-size: 15px;
}
.tray svg {
    width: 17px;
    height: 17px;
}
.ime {
    margin: 0 2px 0 6px;
    padding: 0 1px;
    font-size: 12px;
    border: 1px solid #fff;
}
.clock {
    width: 80px;
    font-size: 12px;
    line-height: 19px;
    text-align: center;
}
.mark {
    position: absolute;
    right: 16px;
    top: 10px;
    font: 18px/22px "Noto Sans", "Noto Sans CJK SC", sans-serif;
    color: rgba(200, 200, 200, .6);
    white-space: nowrap;
}
```
